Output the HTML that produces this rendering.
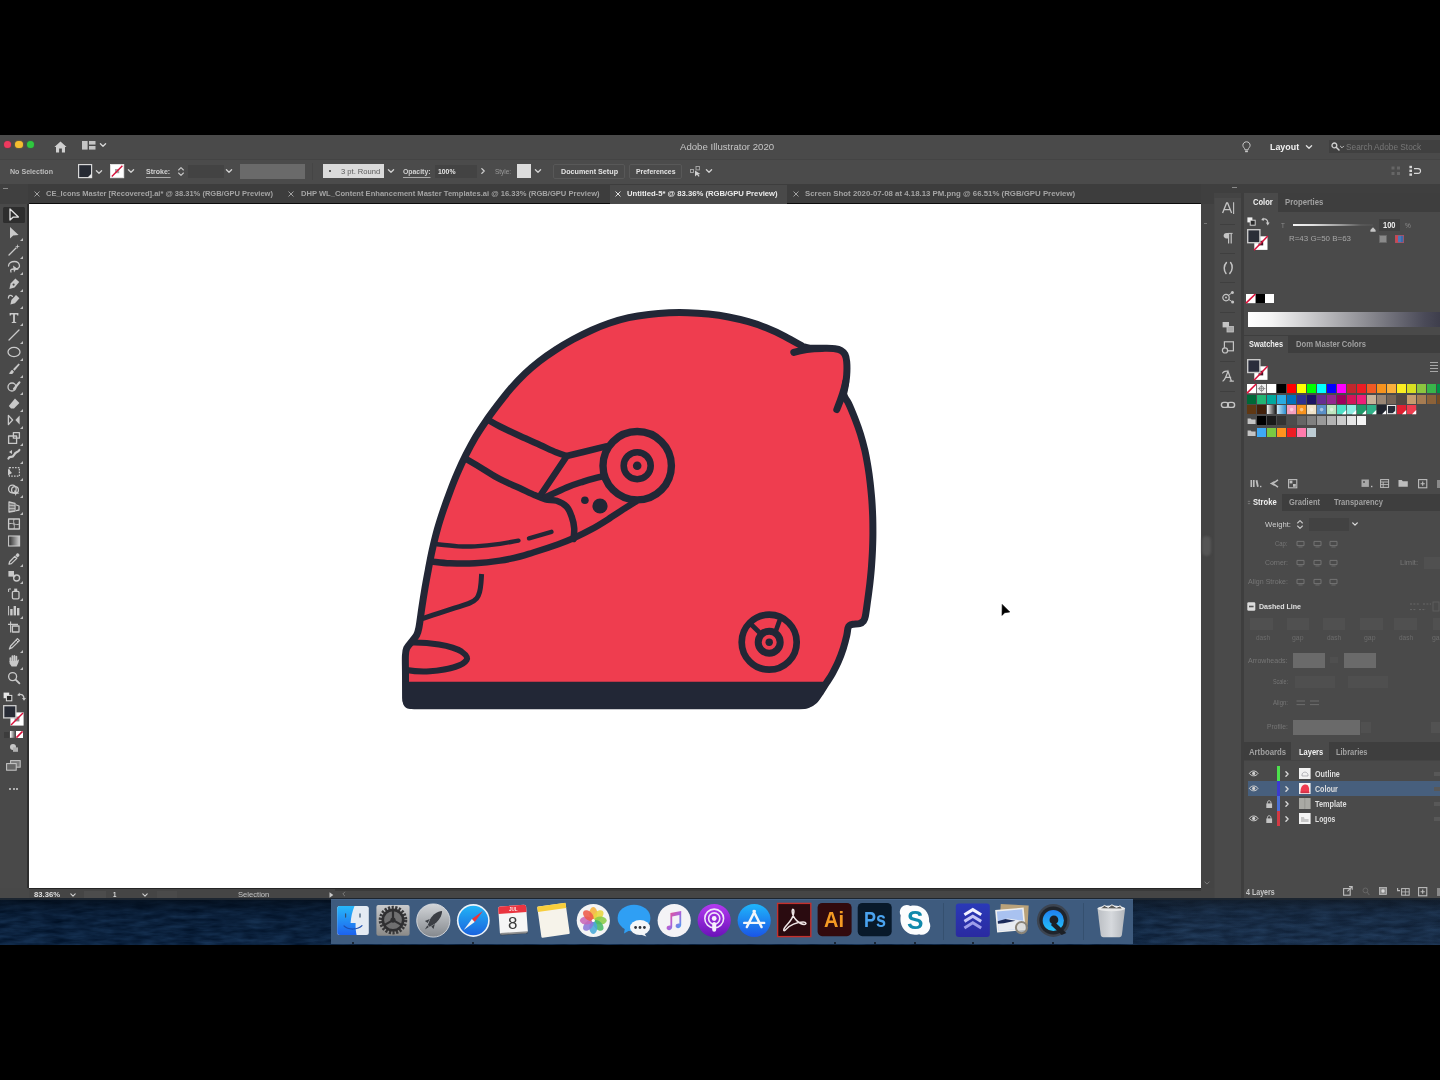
<!DOCTYPE html>
<html lang="en">
<head>
<meta charset="utf-8">
<title>Adobe Illustrator 2020</title>
<style>
*{box-sizing:border-box;margin:0;padding:0}
html,body{width:1440px;height:1080px;overflow:hidden;background:#000}
body{position:relative;font-family:"Liberation Sans",sans-serif;font-size:8px;color:#ddd}
.a{position:absolute;display:block}
svg.a{overflow:visible}
.t{position:absolute;white-space:pre;transform-origin:0 50%;font-family:"Liberation Sans",sans-serif}
.u{text-decoration:underline;text-underline-offset:1px}
#screen{position:absolute;left:0;top:0;width:1440px;height:1080px;overflow:hidden;background:#000}

</style>
</head>
<body>
<div id="screen">
<!-- application window -->
<div class="a" style="left:0px;top:135px;width:1440px;height:764px;background:#4a4a4a;"></div>
<div class="a" style="left:0px;top:135px;width:1440px;height:24px;background:#4a4a4a;"></div>
<div class="a" style="left:0px;top:159px;width:1440px;height:24.5px;background:#4b4b4b;border-top:1px solid #444"></div>
<div class="a" style="left:0px;top:183.5px;width:1440px;height:20.5px;background:#3d3d3d;"></div>
<div class="a" style="left:0px;top:204px;width:28.5px;height:695px;background:#494949;"></div>
<div class="a" style="left:0px;top:183.5px;width:28px;height:20.5px;background:#404040;"></div>
<div class="a" style="left:3px;top:187.5px;width:4.5px;height:1.2px;background:#8a8a8a;"></div>
<div class="a" style="left:28.5px;top:203.3px;width:1172.5px;height:1.2px;background:#0c0c0c;"></div>
<div class="a" style="left:28.8px;top:204.3px;width:1172.2px;height:683.4px;background:#ffffff;"></div>
<div class="a" style="left:26.8px;top:204px;width:2px;height:684px;background:#2e2e2e;filter:blur(.5px)"></div>
<div class="a" style="left:28.5px;top:887.7px;width:1185px;height:11.3px;background:#454545;border-top:1px solid #262626"></div>
<div class="a" style="left:0px;top:887.7px;width:28.5px;height:11.3px;background:#484848;"></div>
<div class="a" style="left:1201px;top:204px;width:12.5px;height:684px;background:#444444;"></div>
<div class="a" style="left:1201.6px;top:536px;width:9.6px;height:20px;background:#555;border-radius:5px;filter:blur(1.2px)"></div>
<div class="a" style="left:1201px;top:887.7px;width:12.5px;height:11.3px;background:#454545;"></div>
<svg class="a" style="left:1203px;top:879.5px;" width="8" height="6" viewBox="0 0 8 6"><path d="M1.8 1.9 L4 4.1 L6.2 1.9" fill="none" stroke="#7a7a7a" stroke-width="1" stroke-linecap="round" stroke-linejoin="round"/></svg>
<div class="a" style="left:1203.5px;top:222.5px;width:3.5px;height:1.2px;background:#777;"></div>
<!-- title bar -->
<div class="a" style="left:3.8px;top:140.8px;width:7.6px;height:7.6px;border-radius:50%;background:#ee3a5f;box-shadow:0 0 1.5px #b02040;filter:blur(.4px)"></div>
<div class="a" style="left:15.3px;top:140.8px;width:7.6px;height:7.6px;border-radius:50%;background:#f4bd30;box-shadow:0 0 1.5px #c89a20;filter:blur(.4px)"></div>
<div class="a" style="left:26.7px;top:140.8px;width:7.6px;height:7.6px;border-radius:50%;background:#2fc83f;box-shadow:0 0 1.5px #1f9a2c;filter:blur(.4px)"></div>
<svg class="a" style="left:54px;top:140.5px;" width="13" height="12" viewBox="0 0 13 12"><path d="M6.5 0.6 L12.6 6 L11 6 L11 11.4 L7.9 11.4 L7.9 7.6 L5.1 7.6 L5.1 11.4 L2 11.4 L2 6 L0.4 6 Z" fill="#cfcfcf"/></svg>
<svg class="a" style="left:81.7px;top:141.2px;" width="13.5" height="8.6" viewBox="0 0 13.5 8.6"><rect x="0" y="0" width="5.6" height="8.6" fill="#c4c4c4"/><rect x="7" y="0" width="6.5" height="3.6" fill="#c4c4c4"/><rect x="7" y="5" width="6.5" height="3.6" fill="#c4c4c4"/></svg>
<svg class="a" style="left:99px;top:142.2px;" width="8" height="6" viewBox="0 0 8 6"><path d="M1.4 1.7 L4 4.3 L6.6 1.7" fill="none" stroke="#d8d8d8" stroke-width="1.3" stroke-linecap="round" stroke-linejoin="round"/></svg>
<span class="t" style="left:680px;top:141.1px;font-size:9.5px;line-height:11.5px;font-weight:normal;color:#c6c6c6;transform:scaleX(1.013);">Adobe Illustrator 2020</span>
<svg class="a" style="left:1242px;top:140.5px;" width="9" height="12" viewBox="0 0 9 12"><path d="M4.5 0.8 C2.3 0.8 0.9 2.4 0.9 4.3 C0.9 5.8 1.9 6.6 2.6 7.6 L2.9 8.8 L6.1 8.8 L6.4 7.6 C7.1 6.6 8.1 5.8 8.1 4.3 C8.1 2.4 6.7 0.8 4.5 0.8 Z" fill="none" stroke="#c8c8c8" stroke-width="1"/><rect x="3.1" y="9.6" width="2.8" height="1.6" fill="#c8c8c8"/></svg>
<span class="t" style="left:1269.7px;top:141.2px;font-size:9.5px;line-height:11.5px;font-weight:bold;color:#f2f2f2;transform:scaleX(0.934);">Layout</span>
<svg class="a" style="left:1305px;top:143.5px;" width="8" height="6" viewBox="0 0 8 6"><path d="M1.4 1.7 L4 4.3 L6.6 1.7" fill="none" stroke="#e0e0e0" stroke-width="1.3" stroke-linecap="round" stroke-linejoin="round"/></svg>
<div class="a" style="left:1329px;top:140px;width:111px;height:12.5px;background:#404040;"></div>
<svg class="a" style="left:1330.5px;top:141.5px;" width="9" height="9" viewBox="0 0 9 9"><circle cx="3.4" cy="3.4" r="2.4" fill="none" stroke="#cfcfcf" stroke-width="1.3"/><path d="M5.2 5.2 L8 8" stroke="#cfcfcf" stroke-width="1.5" stroke-linecap="round"/></svg>
<svg class="a" style="left:1337.5px;top:143.6px;" width="8" height="6" viewBox="0 0 8 6"><path d="M2.4 2.2 L4 3.8 L5.6 2.2" fill="none" stroke="#c0c0c0" stroke-width="1" stroke-linecap="round" stroke-linejoin="round"/></svg>
<span class="t" style="left:1345.8px;top:142.2px;font-size:8.5px;line-height:10.5px;font-weight:normal;color:#777;transform:scaleX(0.974);">Search Adobe Stock</span>
<!-- control bar -->
<span class="t" style="left:10px;top:166.6px;font-size:8px;line-height:10px;font-weight:bold;color:#bdbdbd;transform:scaleX(0.887);">No Selection</span>
<svg class="a" style="left:78.3px;top:164.2px;" width="14.2" height="14.2" viewBox="0 0 14.2 14.2"><rect x="0.6" y="0.6" width="13" height="13" fill="#262a33" stroke="#d8d8d8" stroke-width="1.2"/><path d="M13.6 9.6 L13.6 13.6 L9.6 13.6 Z" fill="#e8e8e8"/></svg>
<svg class="a" style="left:95.3px;top:168.5px;" width="8" height="6" viewBox="0 0 8 6"><path d="M1.4 1.7 L4 4.3 L6.6 1.7" fill="none" stroke="#d0d0d0" stroke-width="1.3" stroke-linecap="round" stroke-linejoin="round"/></svg>
<svg class="a" style="left:110px;top:164.2px;" width="14.2" height="14.2" viewBox="0 0 14.2 14.2"><rect x="0.4" y="0.4" width="13.4" height="13.4" fill="#fff" stroke="#e8e8e8" stroke-width=".8"/><rect x="5" y="5" width="4.2" height="4.2" fill="#5a5a5a" opacity=".55"/><path d="M1.8 12.4 L12.4 1.8" stroke="#d8103a" stroke-width="1.4"/></svg>
<svg class="a" style="left:126.6px;top:168px;" width="8" height="6" viewBox="0 0 8 6"><path d="M1.4 1.7 L4 4.3 L6.6 1.7" fill="none" stroke="#d0d0d0" stroke-width="1.3" stroke-linecap="round" stroke-linejoin="round"/></svg>
<span class="t" style="left:145.8px;top:166.9px;font-size:8px;line-height:10px;font-weight:bold;color:#d2d2d2;transform:scaleX(0.878);border-bottom:0.8px solid #a8a8a8;">Stroke:</span>
<svg class="a" style="left:177px;top:166px;" width="8" height="11" viewBox="0 0 8 11"><path d="M1.6 4 L4 1.6 L6.4 4 M1.6 7 L4 9.4 L6.4 7" fill="none" stroke="#c8c8c8" stroke-width="1.1" stroke-linecap="round" stroke-linejoin="round"/></svg>
<div class="a" style="left:188px;top:165px;width:36px;height:13px;background:#434343;"></div>
<svg class="a" style="left:225.3px;top:168.3px;" width="8" height="6" viewBox="0 0 8 6"><path d="M1.4 1.7 L4 4.3 L6.6 1.7" fill="none" stroke="#d0d0d0" stroke-width="1.3" stroke-linecap="round" stroke-linejoin="round"/></svg>
<div class="a" style="left:240px;top:163.6px;width:65px;height:15.4px;background:#6a6a6a;"></div>
<div class="a" style="left:312px;top:163px;width:1px;height:17px;background:#454545;"></div>
<div class="a" style="left:322.5px;top:164.2px;width:61.7px;height:14.2px;background:#dadada;"></div>
<div class="a" style="left:328.6px;top:170.4px;width:2px;height:2px;background:#333;border-radius:50%"></div>
<span class="t" style="left:340.8px;top:166.8px;font-size:8px;line-height:10px;font-weight:normal;color:#5a5a5a;transform:scaleX(0.948);">3 pt. Round</span>
<svg class="a" style="left:386.8px;top:168.3px;" width="8" height="6" viewBox="0 0 8 6"><path d="M1.4 1.7 L4 4.3 L6.6 1.7" fill="none" stroke="#d0d0d0" stroke-width="1.3" stroke-linecap="round" stroke-linejoin="round"/></svg>
<span class="t" style="left:402.5px;top:166.9px;font-size:8px;line-height:10px;font-weight:bold;color:#d2d2d2;transform:scaleX(0.859);border-bottom:0.8px solid #a8a8a8;">Opacity:</span>
<div class="a" style="left:435px;top:165px;width:42px;height:13px;background:#434343;"></div>
<span class="t" style="left:438.3px;top:166.9px;font-size:8px;line-height:10px;font-weight:bold;color:#e6e6e6;transform:scaleX(0.855);">100%</span>
<svg class="a" style="left:480.3px;top:167.3px;" width="6" height="8" viewBox="0 0 6 8"><path d="M1.8 1.6 L4.2 4 L1.8 6.4" fill="none" stroke="#d0d0d0" stroke-width="1.3" stroke-linecap="round" stroke-linejoin="round"/></svg>
<span class="t" style="left:494.7px;top:166.9px;font-size:8px;line-height:10px;font-weight:normal;color:#9c9c9c;transform:scaleX(0.805);">Style:</span>
<div class="a" style="left:517.2px;top:164.2px;width:14.2px;height:14.2px;background:#dcdcdc;"></div>
<svg class="a" style="left:534px;top:168.3px;" width="8" height="6" viewBox="0 0 8 6"><path d="M1.4 1.7 L4 4.3 L6.6 1.7" fill="none" stroke="#d0d0d0" stroke-width="1.3" stroke-linecap="round" stroke-linejoin="round"/></svg>
<div class="a" style="left:552.5px;top:163.6px;width:72.5px;height:15.4px;background:#4a4a4a;border:1px solid #585858;border-radius:2px"></div>
<span class="t" style="left:560.5px;top:166.9px;font-size:8px;line-height:10px;font-weight:bold;color:#e4e4e4;transform:scaleX(0.897);">Document Setup</span>
<div class="a" style="left:629px;top:163.6px;width:52.7px;height:15.4px;background:#4a4a4a;border:1px solid #585858;border-radius:2px"></div>
<span class="t" style="left:635.8px;top:166.9px;font-size:8px;line-height:10px;font-weight:bold;color:#e4e4e4;transform:scaleX(0.862);">Preferences</span>
<svg class="a" style="left:690px;top:166px;" width="12" height="11" viewBox="0 0 12 11"><rect x="0.5" y="3.5" width="3" height="3" fill="none" stroke="#aaa" stroke-width=".9"/><rect x="6" y="0.5" width="3.4" height="3.4" fill="none" stroke="#aaa" stroke-width=".9"/><path d="M5 4.5 L5 10.5 L7 8.8 L8.6 10.8 L9.6 10 L8.2 8.2 L10.4 8 Z" fill="#d0d0d0"/></svg>
<svg class="a" style="left:704.8px;top:167.6px;" width="8" height="6" viewBox="0 0 8 6"><path d="M1.4 1.7 L4 4.3 L6.6 1.7" fill="none" stroke="#d0d0d0" stroke-width="1.3" stroke-linecap="round" stroke-linejoin="round"/></svg>
<svg class="a" style="left:1391px;top:166px;" width="10" height="10" viewBox="0 0 10 10"><rect x="0.5" y="0.5" width="3" height="3" fill="#666"/><rect x="6" y="0.5" width="3" height="3" fill="#666"/><rect x="0.5" y="6" width="3" height="3" fill="#666"/><rect x="6" y="6" width="3" height="3" fill="#666"/></svg>
<svg class="a" style="left:1409px;top:165px;" width="14" height="12" viewBox="0 0 14 12"><rect x="0.4" y="0.8" width="2.6" height="2.4" fill="#d8d8d8"/><rect x="0.4" y="4.6" width="2.6" height="2.4" fill="#d8d8d8"/><rect x="0.4" y="8.4" width="2.6" height="2.4" fill="#d8d8d8"/><path d="M5 3.6 L9 3.6 C12.4 3.6 12.4 8.4 9 8.4 L5 8.4" fill="none" stroke="#d8d8d8" stroke-width="1.2"/></svg>
<!-- document tabs -->
<div class="a" style="left:610px;top:184.5px;width:176.7px;height:19px;background:#494949;"></div>
<svg class="a" style="left:33.7px;top:190.8px;" width="6" height="6" viewBox="0 0 6 6"><path d="M0.8 0.8 L5.2 5.2 M5.2 0.8 L0.8 5.2" stroke="#a0a0a0" stroke-width="1" stroke-linecap="round"/></svg>
<span class="t" style="left:46.3px;top:189.2px;font-size:8px;line-height:10px;font-weight:bold;color:#a4a4a4;transform:scaleX(0.939);">CE_Icons Master [Recovered].ai* @ 38.31% (RGB/GPU Preview)</span>
<svg class="a" style="left:287.8px;top:190.8px;" width="6" height="6" viewBox="0 0 6 6"><path d="M0.8 0.8 L5.2 5.2 M5.2 0.8 L0.8 5.2" stroke="#a0a0a0" stroke-width="1" stroke-linecap="round"/></svg>
<span class="t" style="left:300.8px;top:189.2px;font-size:8px;line-height:10px;font-weight:bold;color:#a4a4a4;transform:scaleX(0.946);">DHP WL_Content Enhancement Master Templates.ai @ 16.33% (RGB/GPU Preview)</span>
<svg class="a" style="left:614.5px;top:190.8px;" width="6" height="6" viewBox="0 0 6 6"><path d="M0.8 0.8 L5.2 5.2 M5.2 0.8 L0.8 5.2" stroke="#e0e0e0" stroke-width="1" stroke-linecap="round"/></svg>
<span class="t" style="left:627.2px;top:189.2px;font-size:8px;line-height:10px;font-weight:bold;color:#ececec;transform:scaleX(0.961);">Untitled-5* @ 83.36% (RGB/GPU Preview)</span>
<svg class="a" style="left:792.8px;top:190.8px;" width="6" height="6" viewBox="0 0 6 6"><path d="M0.8 0.8 L5.2 5.2 M5.2 0.8 L0.8 5.2" stroke="#a0a0a0" stroke-width="1" stroke-linecap="round"/></svg>
<span class="t" style="left:805px;top:189.2px;font-size:8px;line-height:10px;font-weight:bold;color:#a4a4a4;transform:scaleX(0.979);">Screen Shot 2020-07-08 at 4.18.13 PM.png @ 66.51% (RGB/GPU Preview)</span>
<!-- status bar -->
<span class="t" style="left:34px;top:890px;font-size:8px;line-height:10px;font-weight:bold;color:#dedede;transform:scaleX(0.958);">83.36%</span>
<svg class="a" style="left:69.3px;top:891.8px;" width="8" height="6" viewBox="0 0 8 6"><path d="M1.8 1.9 L4 4.1 L6.2 1.9" fill="none" stroke="#d0d0d0" stroke-width="1.1" stroke-linecap="round" stroke-linejoin="round"/></svg>
<div class="a" style="left:84px;top:891px;width:22px;height:7.5px;background:#4c4c4c;"></div>
<span class="t" style="left:113.3px;top:890px;font-size:8px;line-height:10px;font-weight:bold;color:#dedede;transform:scaleX(0.764);">1</span>
<svg class="a" style="left:141px;top:891.8px;" width="8" height="6" viewBox="0 0 8 6"><path d="M1.8 1.9 L4 4.1 L6.2 1.9" fill="none" stroke="#d0d0d0" stroke-width="1.1" stroke-linecap="round" stroke-linejoin="round"/></svg>
<div class="a" style="left:157px;top:891px;width:20px;height:7.5px;background:#4a4a4a;"></div>
<span class="t" style="left:238px;top:890px;font-size:8px;line-height:10px;font-weight:normal;color:#c4c4c4;transform:scaleX(0.951);">Selection</span>
<svg class="a" style="left:329px;top:891.5px;" width="5" height="6" viewBox="0 0 5 6"><path d="M0.5 0.3 L4.3 3 L0.5 5.7 Z" fill="#c8c8c8"/></svg>
<svg class="a" style="left:340.5px;top:891.4px;" width="6" height="6" viewBox="0 0 6 6"><path d="M4 0.8 L1.8 3 L4 5.2" fill="none" stroke="#7a7a7a" stroke-width="1"/></svg>
<div class="a" style="left:335px;top:888.7px;width:866px;height:2.2px;background:#3a3a3a;"></div>
<!-- mouse cursor -->
<svg class="a" style="left:1000px;top:602px;filter:blur(.4px)" width="12" height="16" viewBox="0 0 12 16"><path d="M2.2 2.4 L2 13.4 L4.7 10.7 L9.8 10 Z" fill="#000" stroke="#000" stroke-width=".6" stroke-linejoin="round"/></svg>
<!-- tools panel -->
<div class="a" style="left:3px;top:207.2px;width:21.5px;height:15.6px;background:#2e2e2e;border-radius:1.5px"></div>
<svg class="a" style="left:5.6px;top:207px;" width="16" height="16" viewBox="0 0 16 16"><path d="M4 2 L4 13 L7 10.2 L12.4 10 Z" fill="none" stroke="#e4e4e4" stroke-width="1.3" stroke-linejoin="round"/></svg>
<svg class="a" style="left:5.6px;top:224.5px;" width="16" height="16" viewBox="0 0 16 16"><path d="M4 2 L4 13.4 L7.2 10.4 L12.6 10 Z" fill="#c9c9c9"/></svg><svg class="a" style="left:20.1px;top:238px;" width="3" height="3" viewBox="0 0 3 3"><path d="M3 0 L3 3 L0 3 Z" fill="#bdbdbd"/></svg>
<svg class="a" style="left:5.6px;top:242px;" width="16" height="16" viewBox="0 0 16 16"><path d="M3 13 L10 6" fill="none" stroke="#c9c9c9" stroke-width="1.3" stroke-linecap="round" stroke-linejoin="round"/><path d="M11.5 2 L12 4 L14 4.5 L12 5 L11.5 7 L11 5 L9 4.5 L11 4 Z" fill="#c9c9c9"/></svg><svg class="a" style="left:20.1px;top:255.5px;" width="3" height="3" viewBox="0 0 3 3"><path d="M3 0 L3 3 L0 3 Z" fill="#bdbdbd"/></svg>
<svg class="a" style="left:5.6px;top:258.5px;" width="16" height="16" viewBox="0 0 16 16"><path d="M2.5 7 C2.5 3.5 5.5 2.5 8.5 2.5 C11.5 2.5 13.5 4.5 13.5 7 C13.5 9 11 10 8 10 C5 10 4 11 5 13" fill="none" stroke="#c9c9c9" stroke-width="1.3" stroke-linecap="round" stroke-linejoin="round"/><path d="M7 6.4 L12.8 10.8 L9.6 11 L8 13.6 Z" fill="#c9c9c9"/></svg><svg class="a" style="left:20.1px;top:272px;" width="3" height="3" viewBox="0 0 3 3"><path d="M3 0 L3 3 L0 3 Z" fill="#bdbdbd"/></svg>
<svg class="a" style="left:5.6px;top:275.7px;" width="16" height="16" viewBox="0 0 16 16"><path d="M9.4 2.4 L13.2 6 L8.6 11.4 L3.4 13 L4.6 7.6 Z" fill="#c9c9c9"/><circle cx="7.6" cy="8.6" r="1.1" fill="#494949"/></svg><svg class="a" style="left:20.1px;top:289.2px;" width="3" height="3" viewBox="0 0 3 3"><path d="M3 0 L3 3 L0 3 Z" fill="#bdbdbd"/></svg>
<svg class="a" style="left:5.6px;top:292.3px;" width="16" height="16" viewBox="0 0 16 16"><path d="M10 3 L13.4 6.2 L9 11.2 L4.4 12.6 L5.4 8 Z" fill="#c9c9c9"/><path d="M2.4 6 C2.4 3 5 2.6 6.4 4.4" fill="none" stroke="#c9c9c9" stroke-width="1.3" stroke-linecap="round" stroke-linejoin="round"/></svg><svg class="a" style="left:20.1px;top:305.8px;" width="3" height="3" viewBox="0 0 3 3"><path d="M3 0 L3 3 L0 3 Z" fill="#bdbdbd"/></svg>
<svg class="a" style="left:5.6px;top:309.5px;" width="16" height="16" viewBox="0 0 16 16"><path d="M3.6 3 L12.4 3 L12.4 5.6 L11.2 5.6 L10.8 4.4 L8.9 4.4 L8.9 11.8 L10.3 12.2 L10.3 13 L5.7 13 L5.7 12.2 L7.1 11.8 L7.1 4.4 L5.2 4.4 L4.8 5.6 L3.6 5.6 Z" fill="#c9c9c9"/></svg><svg class="a" style="left:20.1px;top:323px;" width="3" height="3" viewBox="0 0 3 3"><path d="M3 0 L3 3 L0 3 Z" fill="#bdbdbd"/></svg>
<svg class="a" style="left:5.6px;top:327px;" width="16" height="16" viewBox="0 0 16 16"><path d="M3 13 L13 3" fill="none" stroke="#c9c9c9" stroke-width="1.3" stroke-linecap="round" stroke-linejoin="round"/></svg><svg class="a" style="left:20.1px;top:340.5px;" width="3" height="3" viewBox="0 0 3 3"><path d="M3 0 L3 3 L0 3 Z" fill="#bdbdbd"/></svg>
<svg class="a" style="left:5.6px;top:344.3px;" width="16" height="16" viewBox="0 0 16 16"><ellipse cx="8" cy="8" rx="6" ry="4.6" fill="none" stroke="#c9c9c9" stroke-width="1.3" stroke-linecap="round" stroke-linejoin="round"/></svg><svg class="a" style="left:20.1px;top:357.8px;" width="3" height="3" viewBox="0 0 3 3"><path d="M3 0 L3 3 L0 3 Z" fill="#bdbdbd"/></svg>
<svg class="a" style="left:5.6px;top:361px;" width="16" height="16" viewBox="0 0 16 16"><path d="M12.6 2.4 L13.8 3.6 L8.6 9.8 L7 8.2 Z" fill="#c9c9c9"/><path d="M6.4 9 C4.6 9 4.6 11.6 2.6 12.6 C5 13.6 7.8 12.6 7.8 10.4 Z" fill="#c9c9c9"/></svg><svg class="a" style="left:20.1px;top:374.5px;" width="3" height="3" viewBox="0 0 3 3"><path d="M3 0 L3 3 L0 3 Z" fill="#bdbdbd"/></svg>
<svg class="a" style="left:5.6px;top:378.3px;" width="16" height="16" viewBox="0 0 16 16"><circle cx="6" cy="9" r="4" fill="none" stroke="#c9c9c9" stroke-width="1.3" stroke-linecap="round" stroke-linejoin="round"/><path d="M8 11 L13.4 4.4" stroke="#c9c9c9" stroke-width="2.2" stroke-linecap="round"/></svg><svg class="a" style="left:20.1px;top:391.8px;" width="3" height="3" viewBox="0 0 3 3"><path d="M3 0 L3 3 L0 3 Z" fill="#bdbdbd"/></svg>
<svg class="a" style="left:5.6px;top:395.6px;" width="16" height="16" viewBox="0 0 16 16"><path d="M9 2.6 L13.4 7 L8 12.4 L5 12.4 L2.8 10 Z" fill="#c9c9c9"/></svg><svg class="a" style="left:20.1px;top:409.1px;" width="3" height="3" viewBox="0 0 3 3"><path d="M3 0 L3 3 L0 3 Z" fill="#bdbdbd"/></svg>
<svg class="a" style="left:5.6px;top:412.3px;" width="16" height="16" viewBox="0 0 16 16"><path d="M2.4 3.4 L6.6 8 L2.4 12.6 Z" fill="none" stroke="#c9c9c9" stroke-width="1.3" stroke-linecap="round" stroke-linejoin="round"/><path d="M13.6 3.4 L9.4 8 L13.6 12.6 Z" fill="#c9c9c9"/></svg><svg class="a" style="left:20.1px;top:425.8px;" width="3" height="3" viewBox="0 0 3 3"><path d="M3 0 L3 3 L0 3 Z" fill="#bdbdbd"/></svg>
<svg class="a" style="left:5.6px;top:429.5px;" width="16" height="16" viewBox="0 0 16 16"><rect x="2.6" y="6" width="8" height="7.4" fill="none" stroke="#c9c9c9" stroke-width="1.3" stroke-linecap="round" stroke-linejoin="round"/><rect x="7.4" y="2.6" width="6" height="5.6" fill="none" stroke="#c9c9c9" stroke-width="1.3" stroke-linecap="round" stroke-linejoin="round"/></svg><svg class="a" style="left:20.1px;top:443px;" width="3" height="3" viewBox="0 0 3 3"><path d="M3 0 L3 3 L0 3 Z" fill="#bdbdbd"/></svg>
<svg class="a" style="left:5.6px;top:447px;" width="16" height="16" viewBox="0 0 16 16"><path d="M2.4 11.6 C4 8 6 12 8 8 C10 4 11.6 6 13.4 3" stroke="#c9c9c9" stroke-width="2.2" fill="none" stroke-linecap="round"/><path d="M3 5 L6 3 L6 7 Z" fill="#c9c9c9"/></svg><svg class="a" style="left:20.1px;top:460.5px;" width="3" height="3" viewBox="0 0 3 3"><path d="M3 0 L3 3 L0 3 Z" fill="#bdbdbd"/></svg>
<svg class="a" style="left:5.6px;top:464.3px;" width="16" height="16" viewBox="0 0 16 16"><rect x="3.4" y="3.6" width="10" height="8.6" fill="none" stroke="#c9c9c9" stroke-width="1.2" stroke-dasharray="1.6 1.2"/><path d="M2 4.4 L2 11.6 L6 9 Z" fill="#c9c9c9"/></svg><svg class="a" style="left:20.1px;top:477.8px;" width="3" height="3" viewBox="0 0 3 3"><path d="M3 0 L3 3 L0 3 Z" fill="#bdbdbd"/></svg>
<svg class="a" style="left:5.6px;top:481.6px;" width="16" height="16" viewBox="0 0 16 16"><circle cx="6.4" cy="7" r="3.8" fill="none" stroke="#c9c9c9" stroke-width="1.3" stroke-linecap="round" stroke-linejoin="round"/><circle cx="9" cy="8" r="3.4" fill="none" stroke="#c9c9c9" stroke-width="1.3" stroke-linecap="round" stroke-linejoin="round"/><path d="M8.4 8 L13.4 11.4 L10.6 11.8 L9.4 14 Z" fill="#c9c9c9"/></svg><svg class="a" style="left:20.1px;top:495.1px;" width="3" height="3" viewBox="0 0 3 3"><path d="M3 0 L3 3 L0 3 Z" fill="#bdbdbd"/></svg>
<svg class="a" style="left:5.6px;top:498.8px;" width="16" height="16" viewBox="0 0 16 16"><path d="M3 3 L9 4.4 L9 12 L3 13 Z" fill="none" stroke="#c9c9c9" stroke-width="1.3" stroke-linecap="round" stroke-linejoin="round"/><path d="M5 3.6 L5 12.6 M7 4 L7 12.2 M3 6.2 L9 6.8 M3 9.6 L9 9.6" stroke="#c9c9c9" stroke-width=".8"/><path d="M10.4 6 L13 7 L13 11 L10.4 11.6" fill="none" stroke="#c9c9c9" stroke-width="1.3" stroke-linecap="round" stroke-linejoin="round"/></svg><svg class="a" style="left:20.1px;top:512.3px;" width="3" height="3" viewBox="0 0 3 3"><path d="M3 0 L3 3 L0 3 Z" fill="#bdbdbd"/></svg>
<svg class="a" style="left:5.6px;top:516px;" width="16" height="16" viewBox="0 0 16 16"><rect x="2.6" y="3" width="10.8" height="10" fill="none" stroke="#c9c9c9" stroke-width="1.3" stroke-linecap="round" stroke-linejoin="round"/><path d="M2.6 8 C6 6 10 10 13.4 8 M8 3 C6.6 6 9.4 10 8 13" stroke="#c9c9c9" stroke-width=".9" fill="none"/></svg>
<svg class="a" style="left:5.6px;top:533.2px;" width="16" height="16" viewBox="0 0 16 16"><defs><linearGradient id="gtool" x1="0" x2="1"><stop offset="0" stop-color="#2c2c2c"/><stop offset="1" stop-color="#d0d0d0"/></linearGradient></defs><rect x="2.6" y="3" width="11" height="10" fill="url(#gtool)" stroke="#c9c9c9" stroke-width="1.1"/></svg>
<svg class="a" style="left:5.6px;top:550.6px;" width="16" height="16" viewBox="0 0 16 16"><path d="M10.8 2.6 C12 1.6 14.2 3.6 13.2 5 L11.6 6.6 L9.4 4.4 Z" fill="#c9c9c9"/><path d="M8.8 5.4 L10.8 7.4 L5.4 12.6 L3 13.2 L3.6 10.8 Z" fill="none" stroke="#c9c9c9" stroke-width="1.3" stroke-linecap="round" stroke-linejoin="round"/></svg><svg class="a" style="left:20.1px;top:564.1px;" width="3" height="3" viewBox="0 0 3 3"><path d="M3 0 L3 3 L0 3 Z" fill="#bdbdbd"/></svg>
<svg class="a" style="left:5.6px;top:567.6px;" width="16" height="16" viewBox="0 0 16 16"><rect x="2.4" y="3" width="5.6" height="5.6" fill="#c9c9c9"/><circle cx="10.6" cy="10" r="3" fill="none" stroke="#c9c9c9" stroke-width="1.3" stroke-linecap="round" stroke-linejoin="round"/><path d="M6 6 L9 9" stroke="#c9c9c9" stroke-width="2"/></svg><svg class="a" style="left:20.1px;top:581.1px;" width="3" height="3" viewBox="0 0 3 3"><path d="M3 0 L3 3 L0 3 Z" fill="#bdbdbd"/></svg>
<svg class="a" style="left:5.6px;top:584.8px;" width="16" height="16" viewBox="0 0 16 16"><rect x="6.4" y="6.4" width="6.6" height="7.4" rx="1.2" fill="none" stroke="#c9c9c9" stroke-width="1.3" stroke-linecap="round" stroke-linejoin="round"/><rect x="8.2" y="3.6" width="3" height="2.8" fill="#c9c9c9"/><path d="M2.6 4 L5 4 M2.6 4 L2.6 7" stroke="#c9c9c9" stroke-width="1"/></svg><svg class="a" style="left:20.1px;top:598.3px;" width="3" height="3" viewBox="0 0 3 3"><path d="M3 0 L3 3 L0 3 Z" fill="#bdbdbd"/></svg>
<svg class="a" style="left:5.6px;top:602px;" width="16" height="16" viewBox="0 0 16 16"><path d="M2.6 13.4 L2.6 4" stroke="#c9c9c9" stroke-width="1"/><rect x="4.2" y="7" width="2.4" height="6.4" fill="#c9c9c9"/><rect x="7.6" y="4" width="2.4" height="9.4" fill="#c9c9c9"/><rect x="11" y="6" width="2.4" height="7.4" fill="#c9c9c9"/></svg><svg class="a" style="left:20.1px;top:615.5px;" width="3" height="3" viewBox="0 0 3 3"><path d="M3 0 L3 3 L0 3 Z" fill="#bdbdbd"/></svg>
<svg class="a" style="left:5.6px;top:619.4px;" width="16" height="16" viewBox="0 0 16 16"><path d="M2 5.4 L12 5.4 M4.6 2.6 L4.6 13.4" stroke="#c9c9c9" stroke-width="1.1"/><rect x="6.4" y="7" width="6.6" height="6" fill="none" stroke="#c9c9c9" stroke-width="1.3" stroke-linecap="round" stroke-linejoin="round"/></svg>
<svg class="a" style="left:5.6px;top:636.2px;" width="16" height="16" viewBox="0 0 16 16"><path d="M11.4 2.6 L13.4 4.6 L6.2 11.6 L3.4 13 L4.6 10 Z" fill="none" stroke="#c9c9c9" stroke-width="1.3" stroke-linecap="round" stroke-linejoin="round"/><path d="M10 4 L12 6" stroke="#c9c9c9" stroke-width="1"/></svg><svg class="a" style="left:20.1px;top:649.7px;" width="3" height="3" viewBox="0 0 3 3"><path d="M3 0 L3 3 L0 3 Z" fill="#bdbdbd"/></svg>
<svg class="a" style="left:5.6px;top:653.2px;" width="16" height="16" viewBox="0 0 16 16"><path d="M4.4 8.4 L4.4 5 M6.4 7.6 L6.4 3.2 M8.4 7.6 L8.4 2.8 M10.4 7.8 L10.4 3.6" stroke="#c9c9c9" stroke-width="1.7" stroke-linecap="round"/><path d="M3.6 8 L11.6 7.4 L13.2 6 L12.4 9.6 L10.6 13.4 L5.6 13.4 L3.6 10.6 Z" fill="#c9c9c9"/></svg><svg class="a" style="left:20.1px;top:666.7px;" width="3" height="3" viewBox="0 0 3 3"><path d="M3 0 L3 3 L0 3 Z" fill="#bdbdbd"/></svg>
<svg class="a" style="left:5.6px;top:669.8px;" width="16" height="16" viewBox="0 0 16 16"><circle cx="6.6" cy="6.6" r="4" fill="none" stroke="#c9c9c9" stroke-width="1.3" stroke-linecap="round" stroke-linejoin="round"/><path d="M9.6 9.6 L13.4 13.4" stroke="#c9c9c9" stroke-width="1.8" stroke-linecap="round"/></svg>
<svg class="a" style="left:2.5px;top:692px;" width="9.5" height="9.5" viewBox="0 0 9.5 9.5"><rect x="0.6" y="0.6" width="5.6" height="5.6" fill="#e8e8e8"/><rect x="3.4" y="3.4" width="5.4" height="5.4" fill="#2a2a2a" stroke="#e0e0e0" stroke-width="1"/></svg>
<svg class="a" style="left:17px;top:692px;" width="9" height="9" viewBox="0 0 9 9"><path d="M1 3 C4.4 1.4 7 3 7 6.6" fill="none" stroke="#c8c8c8" stroke-width="1.3"/><path d="M5 6 L9 6 L7 8.8 Z" fill="#c8c8c8"/><path d="M0.2 3.2 L2.6 0.6 L3 4 Z" fill="#c8c8c8"/></svg>
<svg class="a" style="left:10px;top:712.3px;" width="14" height="14" viewBox="0 0 14 14"><rect x="0.4" y="0.4" width="13.2" height="13.2" fill="#fff"/><rect x="4.6" y="4.6" width="4.8" height="4.8" fill="#555" opacity=".7"/><path d="M1 13 L13 1" stroke="#d8103a" stroke-width="1.5"/></svg>
<svg class="a" style="left:3px;top:705px;" width="13.6" height="13.6" viewBox="0 0 13.6 13.6"><rect x="0.7" y="0.7" width="12.2" height="12.2" fill="#282c36" stroke="#cfcfcf" stroke-width="1.3"/></svg>
<div class="a" style="left:3.5px;top:731.5px;width:5.6px;height:6.4px;background:#3c3c3c;"></div>
<svg class="a" style="left:10px;top:731.3px;" width="5" height="6.8" viewBox="0 0 5 6.8"><defs><linearGradient id="gm" x1="0" x2="1"><stop offset="0" stop-color="#fff"/><stop offset="1" stop-color="#555"/></linearGradient></defs><rect width="5" height="6.8" fill="url(#gm)"/></svg>
<svg class="a" style="left:16.4px;top:731.2px;" width="7" height="7" viewBox="0 0 7 7"><rect width="7" height="7" fill="#fff"/><path d="M0.4 6.6 L6.6 0.4" stroke="#d8103a" stroke-width="1.5"/></svg>
<svg class="a" style="left:8.5px;top:742.5px;" width="10" height="10" viewBox="0 0 10 10"><circle cx="4" cy="4" r="3" fill="#c8c8c8"/><rect x="4" y="4.4" width="5" height="4.4" fill="#b0b0b0"/></svg>
<svg class="a" style="left:6px;top:759.5px;" width="15" height="11" viewBox="0 0 15 11"><rect x="4.6" y="0.6" width="9.6" height="6.6" fill="#7c7c7c" stroke="#c8c8c8" stroke-width="1"/><rect x="0.6" y="3.6" width="9.6" height="6.6" fill="#666" stroke="#c8c8c8" stroke-width="1"/></svg>
<div class="a" style="left:9.2px;top:787.8px;width:2px;height:2px;background:#d0d0d0;border-radius:50%"></div>
<div class="a" style="left:12.8px;top:787.8px;width:2px;height:2px;background:#d0d0d0;border-radius:50%"></div>
<div class="a" style="left:16.4px;top:787.8px;width:2px;height:2px;background:#d0d0d0;border-radius:50%"></div>
<!-- right icon dock + panels -->
<div class="a" style="left:1201px;top:183.5px;width:239px;height:9px;background:#3f3f3f;"></div>
<div class="a" style="left:1201px;top:192.5px;width:13px;height:11.5px;background:#3f3f3f;"></div>
<div class="a" style="left:1232px;top:187px;width:4.5px;height:1.2px;background:#8a8a8a;"></div>
<div class="a" style="left:1213.5px;top:192.5px;width:27.5px;height:706.5px;background:#4a4a4a;border-left:1px solid #474747"></div>
<div class="a" style="left:1213.5px;top:192.5px;width:27.5px;height:5px;background:#444;"></div>
<div class="a" style="left:1241px;top:192.5px;width:2.5px;height:706.5px;background:#3e3e3e;"></div>
<div class="a" style="left:1243.5px;top:192.5px;width:196.5px;height:706.5px;background:#4a4a4a;"></div>
<svg class="a" style="left:1219.5px;top:200.3px;" width="16" height="16" viewBox="0 0 16 16"><path d="M2.6 13 L6.6 3 L7.6 3 L11.6 13 M4.2 9.6 L10 9.6" fill="none" stroke="#c4c4c4" stroke-width="1.3"/><path d="M13.6 2.2 L13.6 14" stroke="#c4c4c4" stroke-width="1.1"/></svg>
<svg class="a" style="left:1219.5px;top:230.3px;" width="16" height="16" viewBox="0 0 16 16"><path d="M8.6 3.4 L8.6 13.4 M11.2 3.4 L11.2 13.4" stroke="#c4c4c4" stroke-width="1.2"/><path d="M8.6 3 L6.6 3 C2.6 3 2.6 8.4 6.6 8.4 L8.6 8.4 Z" fill="#c4c4c4"/><path d="M8 3.4 L12.6 3.4" stroke="#c4c4c4" stroke-width="1"/></svg>
<svg class="a" style="left:1219.5px;top:259.6px;" width="16" height="16" viewBox="0 0 16 16"><path d="M6.4 2.6 C3.6 5.4 3.6 10.6 6 13.4 M10.6 2.6 C13 5.4 12.6 10.6 9.8 13.4" fill="none" stroke="#c4c4c4" stroke-width="1.5" stroke-linecap="round"/></svg>
<svg class="a" style="left:1219.5px;top:289px;" width="16" height="16" viewBox="0 0 16 16"><circle cx="6" cy="8.6" r="3.2" fill="none" stroke="#c4c4c4" stroke-width="1.2"/><circle cx="6" cy="8.6" r="1" fill="#c4c4c4"/><circle cx="12.4" cy="3.4" r="1.5" fill="#c4c4c4"/><circle cx="12.6" cy="13" r="1.5" fill="#c4c4c4"/><path d="M8.4 6.6 L11.6 4 M8.6 10.4 L11.8 12.4" stroke="#c4c4c4" stroke-width="1"/></svg>
<svg class="a" style="left:1219.5px;top:318.5px;" width="16" height="16" viewBox="0 0 16 16"><rect x="2.6" y="3" width="6.4" height="5.4" fill="#c4c4c4"/><rect x="7" y="7.4" width="6.4" height="5.6" fill="#a8a8a8" stroke="#c4c4c4" stroke-width=".8"/></svg>
<svg class="a" style="left:1219.5px;top:339px;" width="16" height="16" viewBox="0 0 16 16"><rect x="4.4" y="2.8" width="9" height="9" fill="none" stroke="#c4c4c4" stroke-width="1.2"/><circle cx="5" cy="11.4" r="2.6" fill="#4a4a4a" stroke="#c4c4c4" stroke-width="1.2"/></svg>
<svg class="a" style="left:1219.5px;top:368px;" width="16" height="16" viewBox="0 0 16 16"><path d="M3 13 C5 12 6 9 8 3.4 L11.4 13 M5.6 9.4 L10.6 9.4 M2.6 5 C4 3 6.6 3 8 3.4 M10 13 L13.4 13" fill="none" stroke="#c4c4c4" stroke-width="1.25" stroke-linecap="round"/></svg>
<svg class="a" style="left:1219.5px;top:397px;" width="16" height="16" viewBox="0 0 16 16"><rect x="1.4" y="5.4" width="7" height="5" rx="2.5" fill="none" stroke="#c4c4c4" stroke-width="1.4"/><rect x="7.6" y="5.4" width="7" height="5" rx="2.5" fill="none" stroke="#c4c4c4" stroke-width="1.4"/></svg>
<div class="a" style="left:1220px;top:224px;width:15px;height:1px;background:#3f3f3f;"></div>
<div class="a" style="left:1220px;top:253px;width:15px;height:1px;background:#3f3f3f;"></div>
<div class="a" style="left:1220px;top:282px;width:15px;height:1px;background:#3f3f3f;"></div>
<div class="a" style="left:1220px;top:311.5px;width:15px;height:1px;background:#3f3f3f;"></div>
<div class="a" style="left:1220px;top:361px;width:15px;height:1px;background:#3f3f3f;"></div>
<div class="a" style="left:1220px;top:390.5px;width:15px;height:1px;background:#3f3f3f;"></div>
<!-- color panel -->
<div class="a" style="left:1243.5px;top:192.5px;width:196.5px;height:19.3px;background:#3e3e3e;"></div>
<div class="a" style="left:1244.3px;top:193.3px;width:34px;height:18.5px;background:#4a4a4a;"></div>
<span class="t" style="left:1253px;top:197px;font-size:8.5px;line-height:10.5px;font-weight:bold;color:#f0f0f0;transform:scaleX(0.892);">Color</span>
<span class="t" style="left:1285px;top:197px;font-size:8.5px;line-height:10.5px;font-weight:bold;color:#a0a0a0;transform:scaleX(0.911);">Properties</span>
<svg class="a" style="left:1246.5px;top:217px;" width="8.6" height="8.6" viewBox="0 0 8.6 8.6"><rect x="0.4" y="0.4" width="5" height="5" fill="#f0f0f0"/><rect x="3.2" y="3.2" width="5" height="5" fill="#2a2a2a" stroke="#ddd" stroke-width=".9"/></svg>
<svg class="a" style="left:1261px;top:216.8px;" width="8.6" height="8.6" viewBox="0 0 8.6 8.6"><path d="M1.4 2.4 C4.6 1 7 3 6.8 6.4" fill="none" stroke="#c8c8c8" stroke-width="1.3"/><path d="M4.8 5.6 L8.6 5.6 L6.8 8.4 Z" fill="#c8c8c8"/><path d="M0.2 3 L2.4 0.4 L3 3.8 Z" fill="#c8c8c8"/></svg>
<svg class="a" style="left:1254px;top:235.8px;" width="13.8" height="14.2" viewBox="0 0 13.8 14.2"><rect x="0.3" y="0.3" width="13.2" height="13.6" fill="#fff"/><rect x="4.6" y="4.8" width="4.6" height="4.6" fill="#4a1a2a"/><path d="M0 14.2 L13.8 0" stroke="#d8103a" stroke-width="1.5"/></svg>
<svg class="a" style="left:1246.6px;top:229px;" width="13.6" height="14.4" viewBox="0 0 13.6 14.4"><rect x="0.7" y="0.7" width="12.2" height="13" fill="#2a2e37" stroke="#c8c8c8" stroke-width="1.4"/></svg>
<span class="t" style="left:1280.5px;top:220.6px;font-size:8px;line-height:10px;font-weight:normal;color:#8c8c8c;transform:scaleX(0.777);">T</span>
<div class="a" style="left:1292.5px;top:223.6px;width:80px;height:2.8px;background:linear-gradient(90deg,#f4f4f4 0%,#e0e0e0 25%,#9a9a9a 60%,#585858 85%,#505050 100%)"></div>
<svg class="a" style="left:1369.5px;top:226.5px;" width="6" height="5" viewBox="0 0 6 5"><path d="M3 0.3 L5.6 3 L5.6 4.8 L0.4 4.8 L0.4 3 Z" fill="#c4c4c4"/></svg>
<div class="a" style="left:1379px;top:218.5px;width:21px;height:12.5px;background:#404040;"></div>
<span class="t" style="left:1382.5px;top:220px;font-size:8.5px;line-height:10.5px;font-weight:bold;color:#ededed;transform:scaleX(0.881);">100</span>
<span class="t" style="left:1404.6px;top:220.6px;font-size:8px;line-height:10px;font-weight:normal;color:#8c8c8c;transform:scaleX(0.815);">%</span>
<span class="t" style="left:1289px;top:234px;font-size:8px;line-height:10px;font-weight:normal;color:#a6a6a6;transform:scaleX(0.992);">R=43 G=50 B=63</span>
<svg class="a" style="left:1378.5px;top:235px;" width="8" height="8" viewBox="0 0 8 8"><rect x="0.5" y="0.5" width="7" height="7" fill="#8a8a8a" stroke="#6a6a6a" stroke-width=".8"/></svg>
<svg class="a" style="left:1395px;top:235px;" width="9" height="8" viewBox="0 0 9 8"><rect x="0" y="0" width="3" height="8" fill="#d0454f"/><rect x="3" y="0" width="3" height="8" fill="#4a78b8"/><rect x="6" y="0" width="3" height="8" fill="#3d6aa8"/><rect x="0.4" y="0.4" width="8.2" height="7.2" fill="none" stroke="#b05060" stroke-width=".8"/></svg>
<svg class="a" style="left:1246.4px;top:294.2px;" width="9.4" height="9.2" viewBox="0 0 9.4 9.2"><rect width="9.4" height="9.2" fill="#fff"/><path d="M0 9.2 L9.4 0" stroke="#e0103a" stroke-width="1.6"/></svg>
<div class="a" style="left:1255.8px;top:294.2px;width:9.2px;height:9.2px;background:#000;"></div>
<div class="a" style="left:1265px;top:294.2px;width:9.2px;height:9.2px;background:#fff;"></div>
<div class="a" style="left:1247.6px;top:311.7px;width:192.4px;height:15.8px;background:linear-gradient(90deg,#ffffff 0%,#f4f4f4 12%,#cfcfd1 30%,#a9a9ad 48%,#85858c 65%,#64646f 80%,#4a4a58 92%,#3e3e4c 100%)"></div>
<!-- swatches panel -->
<div class="a" style="left:1243.5px;top:334.8px;width:196.5px;height:18.2px;background:#3e3e3e;"></div>
<div class="a" style="left:1244.3px;top:335.6px;width:43.7px;height:17.6px;background:#4a4a4a;"></div>
<span class="t" style="left:1248.8px;top:339.4px;font-size:8.5px;line-height:10.5px;font-weight:bold;color:#f0f0f0;transform:scaleX(0.867);">Swatches</span>
<span class="t" style="left:1295.8px;top:339.4px;font-size:8.5px;line-height:10.5px;font-weight:bold;color:#a0a0a0;transform:scaleX(0.898);">Dom Master Colors</span>
<svg class="a" style="left:1254px;top:366px;" width="13.8" height="14.2" viewBox="0 0 13.8 14.2"><rect x="0.3" y="0.3" width="13.2" height="13.6" fill="#fff"/><rect x="4.6" y="4.8" width="4.6" height="4.6" fill="#4a1a2a"/><path d="M0 14.2 L13.8 0" stroke="#d8103a" stroke-width="1.5"/></svg>
<svg class="a" style="left:1246.6px;top:359px;" width="13.6" height="14.2" viewBox="0 0 13.6 14.2"><rect x="0.7" y="0.7" width="12.2" height="12.8" fill="#2a2d3c" stroke="#c8c8c8" stroke-width="1.4"/></svg>
<div class="a" style="left:1430px;top:362.3px;width:8.4px;height:1.2px;background:#a8a8a8;"></div>
<div class="a" style="left:1430px;top:365.2px;width:8.4px;height:1.2px;background:#a8a8a8;"></div>
<div class="a" style="left:1430px;top:368.1px;width:8.4px;height:1.2px;background:#a8a8a8;"></div>
<div class="a" style="left:1430px;top:371px;width:8.4px;height:1.2px;background:#a8a8a8;"></div>
<svg class="a" style="left:1246.6px;top:384.3px;" width="9.2" height="9.2" viewBox="0 0 9.2 9.2"><rect width="9.2" height="9.2" fill="#fff"/><path d="M0 9.2 L9.2 0" stroke="#e0103a" stroke-width="1.6"/></svg>
<svg class="a" style="left:1256.63px;top:384.3px;" width="9.2" height="9.2" viewBox="0 0 9.2 9.2"><rect width="9.2" height="9.2" fill="#f0f0f0"/><circle cx="4.6" cy="4.6" r="2.2" fill="none" stroke="#777" stroke-width=".8"/><path d="M4.6 0.8 L4.6 8.4 M0.8 4.6 L8.4 4.6" stroke="#777" stroke-width=".7"/></svg>
<div class="a" style="left:1266.66px;top:384.3px;width:9.2px;height:9.2px;background:#ffffff;"></div>
<div class="a" style="left:1276.69px;top:384.3px;width:9.2px;height:9.2px;background:#000000;"></div>
<div class="a" style="left:1286.72px;top:384.3px;width:9.2px;height:9.2px;background:#ff0000;"></div>
<div class="a" style="left:1296.75px;top:384.3px;width:9.2px;height:9.2px;background:#ffff00;"></div>
<div class="a" style="left:1306.78px;top:384.3px;width:9.2px;height:9.2px;background:#00ff00;"></div>
<div class="a" style="left:1316.81px;top:384.3px;width:9.2px;height:9.2px;background:#00ffff;"></div>
<div class="a" style="left:1326.84px;top:384.3px;width:9.2px;height:9.2px;background:#0000ff;"></div>
<div class="a" style="left:1336.87px;top:384.3px;width:9.2px;height:9.2px;background:#ff00ff;"></div>
<div class="a" style="left:1346.9px;top:384.3px;width:9.2px;height:9.2px;background:#c1272d;"></div>
<div class="a" style="left:1356.93px;top:384.3px;width:9.2px;height:9.2px;background:#ed1c24;"></div>
<div class="a" style="left:1366.96px;top:384.3px;width:9.2px;height:9.2px;background:#f15a24;"></div>
<div class="a" style="left:1376.99px;top:384.3px;width:9.2px;height:9.2px;background:#f7931e;"></div>
<div class="a" style="left:1387.02px;top:384.3px;width:9.2px;height:9.2px;background:#fbb03b;"></div>
<div class="a" style="left:1397.05px;top:384.3px;width:9.2px;height:9.2px;background:#fcee21;"></div>
<div class="a" style="left:1407.08px;top:384.3px;width:9.2px;height:9.2px;background:#d9e021;"></div>
<div class="a" style="left:1417.11px;top:384.3px;width:9.2px;height:9.2px;background:#8cc63f;"></div>
<div class="a" style="left:1427.14px;top:384.3px;width:9.2px;height:9.2px;background:#39b54a;"></div>
<div class="a" style="left:1437.17px;top:384.3px;width:9.2px;height:9.2px;background:#009245;"></div>
<div class="a" style="left:1246.6px;top:394.8px;width:9.2px;height:9.2px;background:#006837;"></div>
<div class="a" style="left:1256.63px;top:394.8px;width:9.2px;height:9.2px;background:#22b573;"></div>
<div class="a" style="left:1266.66px;top:394.8px;width:9.2px;height:9.2px;background:#00a99d;"></div>
<div class="a" style="left:1276.69px;top:394.8px;width:9.2px;height:9.2px;background:#29abe2;"></div>
<div class="a" style="left:1286.72px;top:394.8px;width:9.2px;height:9.2px;background:#0071bc;"></div>
<div class="a" style="left:1296.75px;top:394.8px;width:9.2px;height:9.2px;background:#2e3192;"></div>
<div class="a" style="left:1306.78px;top:394.8px;width:9.2px;height:9.2px;background:#1b1464;"></div>
<div class="a" style="left:1316.81px;top:394.8px;width:9.2px;height:9.2px;background:#662d91;"></div>
<div class="a" style="left:1326.84px;top:394.8px;width:9.2px;height:9.2px;background:#93278f;"></div>
<div class="a" style="left:1336.87px;top:394.8px;width:9.2px;height:9.2px;background:#9e005d;"></div>
<div class="a" style="left:1346.9px;top:394.8px;width:9.2px;height:9.2px;background:#d4145a;"></div>
<div class="a" style="left:1356.93px;top:394.8px;width:9.2px;height:9.2px;background:#ed1e79;"></div>
<div class="a" style="left:1366.96px;top:394.8px;width:9.2px;height:9.2px;background:#c7b299;"></div>
<div class="a" style="left:1376.99px;top:394.8px;width:9.2px;height:9.2px;background:#998675;"></div>
<div class="a" style="left:1387.02px;top:394.8px;width:9.2px;height:9.2px;background:#736357;"></div>
<div class="a" style="left:1397.05px;top:394.8px;width:9.2px;height:9.2px;background:#534741;"></div>
<div class="a" style="left:1407.08px;top:394.8px;width:9.2px;height:9.2px;background:#c69c6d;"></div>
<div class="a" style="left:1417.11px;top:394.8px;width:9.2px;height:9.2px;background:#a67c52;"></div>
<div class="a" style="left:1427.14px;top:394.8px;width:9.2px;height:9.2px;background:#8c6239;"></div>
<div class="a" style="left:1437.17px;top:394.8px;width:9.2px;height:9.2px;background:#754c24;"></div>
<div class="a" style="left:1246.6px;top:405.3px;width:9.2px;height:9.2px;background:#603813;"></div>
<div class="a" style="left:1256.63px;top:405.3px;width:9.2px;height:9.2px;background:#42210b;"></div>
<div class="a" style="left:1266.66px;top:405.3px;width:9.2px;height:9.2px;background:linear-gradient(90deg,#f4f4f4,#1a1a1a)"></div>
<div class="a" style="left:1276.69px;top:405.3px;width:9.2px;height:9.2px;background:linear-gradient(90deg,#cfe8f7,#2a8fd0)"></div>
<svg class="a" style="left:1286.72px;top:405.3px;" width="9.2" height="9.2" viewBox="0 0 9.2 9.2"><rect width="9.2" height="9.2" fill="#f5a0c0"/><circle cx="4.6" cy="4.6" r="1.8" fill="#fff" opacity=".45"/></svg>
<svg class="a" style="left:1296.75px;top:405.3px;" width="9.2" height="9.2" viewBox="0 0 9.2 9.2"><rect width="9.2" height="9.2" fill="#f7931e"/><circle cx="4.6" cy="4.6" r="1.8" fill="#fff" opacity=".45"/></svg>
<svg class="a" style="left:1306.78px;top:405.3px;" width="9.2" height="9.2" viewBox="0 0 9.2 9.2"><rect width="9.2" height="9.2" fill="#efe2c8"/><circle cx="4.6" cy="4.6" r="1.8" fill="#fff" opacity=".45"/></svg>
<svg class="a" style="left:1316.81px;top:405.3px;" width="9.2" height="9.2" viewBox="0 0 9.2 9.2"><rect width="9.2" height="9.2" fill="#5a90c8"/><circle cx="4.6" cy="4.6" r="1.8" fill="#fff" opacity=".45"/></svg>
<svg class="a" style="left:1326.84px;top:405.3px;" width="9.2" height="9.2" viewBox="0 0 9.2 9.2"><rect width="9.2" height="9.2" fill="#bfe6c0"/><circle cx="4.6" cy="4.6" r="1.8" fill="#fff" opacity=".45"/></svg>
<svg class="a" style="left:1336.87px;top:405.3px;" width="9.2" height="9.2" viewBox="0 0 9.2 9.2"><rect width="9.2" height="9.2" fill="#4fe0c8"/><path d="M9.2 5 L9.2 9.2 L5 9.2 Z" fill="#fff"/></svg>
<svg class="a" style="left:1346.9px;top:405.3px;" width="9.2" height="9.2" viewBox="0 0 9.2 9.2"><rect width="9.2" height="9.2" fill="#8feee4"/><path d="M9.2 5 L9.2 9.2 L5 9.2 Z" fill="#fff"/></svg>
<svg class="a" style="left:1356.93px;top:405.3px;" width="9.2" height="9.2" viewBox="0 0 9.2 9.2"><rect width="9.2" height="9.2" fill="#1f9a6a"/><path d="M9.2 5 L9.2 9.2 L5 9.2 Z" fill="#fff"/></svg>
<svg class="a" style="left:1366.96px;top:405.3px;" width="9.2" height="9.2" viewBox="0 0 9.2 9.2"><rect width="9.2" height="9.2" fill="#2fb088"/><path d="M9.2 5 L9.2 9.2 L5 9.2 Z" fill="#fff"/></svg>
<svg class="a" style="left:1376.99px;top:405.3px;" width="9.2" height="9.2" viewBox="0 0 9.2 9.2"><rect width="9.2" height="9.2" fill="#20242e"/><path d="M9.2 5 L9.2 9.2 L5 9.2 Z" fill="#fff"/></svg>
<svg class="a" style="left:1387.02px;top:405.3px;" width="9.2" height="9.2" viewBox="0 0 9.2 9.2"><rect x="0.5" y="0.5" width="8.2" height="8.2" fill="#262b37" stroke="#e8e8e8" stroke-width="1"/><path d="M8.6 5.4 L8.6 8.6 L5.4 8.6 Z" fill="#fff"/></svg>
<svg class="a" style="left:1397.05px;top:405.3px;" width="9.2" height="9.2" viewBox="0 0 9.2 9.2"><rect width="9.2" height="9.2" fill="#e01f30"/><path d="M9.2 5 L9.2 9.2 L5 9.2 Z" fill="#fff"/></svg>
<svg class="a" style="left:1407.08px;top:405.3px;" width="9.2" height="9.2" viewBox="0 0 9.2 9.2"><rect width="9.2" height="9.2" fill="#ef3d4f"/><path d="M9.2 5 L9.2 9.2 L5 9.2 Z" fill="#fff"/></svg>
<svg class="a" style="left:1246.6px;top:416.3px;" width="9.2" height="9.2" viewBox="0 0 9.2 9.2"><path d="M0.6 2.4 L3.6 2.4 L4.6 3.6 L8.6 3.6 L8.6 8 L0.6 8 Z" fill="#c4c4c4"/></svg>
<div class="a" style="left:1256.63px;top:416.3px;width:9.2px;height:9.2px;background:#000000;"></div>
<div class="a" style="left:1266.66px;top:416.3px;width:9.2px;height:9.2px;background:#1a1a1a;"></div>
<div class="a" style="left:1276.69px;top:416.3px;width:9.2px;height:9.2px;background:#333333;"></div>
<div class="a" style="left:1286.72px;top:416.3px;width:9.2px;height:9.2px;background:#4d4d4d;"></div>
<div class="a" style="left:1296.75px;top:416.3px;width:9.2px;height:9.2px;background:#666666;"></div>
<div class="a" style="left:1306.78px;top:416.3px;width:9.2px;height:9.2px;background:#808080;"></div>
<div class="a" style="left:1316.81px;top:416.3px;width:9.2px;height:9.2px;background:#999999;"></div>
<div class="a" style="left:1326.84px;top:416.3px;width:9.2px;height:9.2px;background:#b3b3b3;"></div>
<div class="a" style="left:1336.87px;top:416.3px;width:9.2px;height:9.2px;background:#cccccc;"></div>
<div class="a" style="left:1346.9px;top:416.3px;width:9.2px;height:9.2px;background:#e6e6e6;"></div>
<div class="a" style="left:1356.93px;top:416.3px;width:9.2px;height:9.2px;background:#f4f4f4;"></div>
<svg class="a" style="left:1246.6px;top:427.6px;" width="9.2" height="9.2" viewBox="0 0 9.2 9.2"><path d="M0.6 2.4 L3.6 2.4 L4.6 3.6 L8.6 3.6 L8.6 8 L0.6 8 Z" fill="#c4c4c4"/></svg>
<div class="a" style="left:1256.63px;top:427.6px;width:9.2px;height:9.2px;background:#3fa9f5;"></div>
<div class="a" style="left:1266.66px;top:427.6px;width:9.2px;height:9.2px;background:#7ac943;"></div>
<div class="a" style="left:1276.69px;top:427.6px;width:9.2px;height:9.2px;background:#ff931e;"></div>
<div class="a" style="left:1286.72px;top:427.6px;width:9.2px;height:9.2px;background:#ed1c24;"></div>
<div class="a" style="left:1296.75px;top:427.6px;width:9.2px;height:9.2px;background:#ff7bac;"></div>
<div class="a" style="left:1306.78px;top:427.6px;width:9.2px;height:9.2px;background:#bdccd4;"></div>
<svg class="a" style="left:1250px;top:479px;" width="12" height="9" viewBox="0 0 12 9"><rect x="0.5" y="1" width="1.6" height="7" fill="#bdbdbd"/><rect x="3" y="1" width="1.6" height="7" fill="#bdbdbd"/><path d="M5.6 1.4 L7.4 1 L8.8 7.6 L7 8 Z" fill="#bdbdbd"/><rect x="10" y="6.8" width="1.4" height="1.4" fill="#bdbdbd"/></svg>
<svg class="a" style="left:1269.5px;top:479px;" width="10" height="9" viewBox="0 0 10 9"><path d="M8 0.8 L3 4.5 L8 8.2" fill="none" stroke="#bdbdbd" stroke-width="1.5"/><path d="M4.6 2.6 L1 4.5 L4.6 6.4" fill="none" stroke="#bdbdbd" stroke-width="1.1"/></svg>
<svg class="a" style="left:1288px;top:478.6px;" width="9.4" height="9.4" viewBox="0 0 9.4 9.4"><rect x="0.6" y="0.6" width="8.2" height="8.2" fill="none" stroke="#bdbdbd" stroke-width="1.1"/><rect x="1.6" y="1.6" width="2.8" height="2.8" fill="#bdbdbd"/><rect x="5" y="5" width="2.8" height="2.8" fill="#bdbdbd"/></svg>
<svg class="a" style="left:1361px;top:479px;" width="12" height="9" viewBox="0 0 12 9"><rect x="0.5" y="0.5" width="7.4" height="7.4" fill="#a8a8a8"/><rect x="2" y="2" width="2" height="2" fill="#666"/><rect x="10" y="6.8" width="1.4" height="1.4" fill="#bdbdbd"/></svg>
<svg class="a" style="left:1380px;top:479px;" width="9.4" height="9" viewBox="0 0 9.4 9"><rect x="0.6" y="0.6" width="8" height="7.8" fill="none" stroke="#bdbdbd" stroke-width="1"/><path d="M0.6 3 L8.6 3 M3.2 3 L3.2 8.4 M0.6 5.6 L8.6 5.6" stroke="#bdbdbd" stroke-width=".9"/></svg>
<svg class="a" style="left:1398px;top:479.4px;" width="10.4" height="8.4" viewBox="0 0 10.4 8.4"><path d="M0.5 1 L3.8 1 L4.8 2.2 L9.8 2.2 L9.8 7.8 L0.5 7.8 Z" fill="#bdbdbd"/></svg>
<svg class="a" style="left:1418px;top:478.8px;" width="9.4" height="9.4" viewBox="0 0 9.4 9.4"><rect x="0.6" y="0.6" width="8.2" height="8.2" fill="none" stroke="#bdbdbd" stroke-width="1.1"/><path d="M4.7 2.6 L4.7 6.8 M2.6 4.7 L6.8 4.7" stroke="#bdbdbd" stroke-width="1.1"/></svg>
<div class="a" style="left:1437px;top:479.6px;width:3px;height:8px;background:#8a8a8a;"></div>
<!-- stroke panel -->
<div class="a" style="left:1243.5px;top:493.6px;width:196.5px;height:17.8px;background:#3e3e3e;"></div>
<div class="a" style="left:1244.3px;top:494.4px;width:38px;height:17.2px;background:#4a4a4a;"></div>
<svg class="a" style="left:1247px;top:499.5px;" width="4" height="5" viewBox="0 0 4 5"><path d="M2 0.4 L3.6 2 L0.4 2 Z M2 4.6 L3.6 3 L0.4 3 Z" fill="#777"/></svg>
<span class="t" style="left:1253px;top:497.3px;font-size:8.5px;line-height:10.5px;font-weight:bold;color:#f0f0f0;transform:scaleX(0.896);">Stroke</span>
<span class="t" style="left:1289px;top:497.3px;font-size:8.5px;line-height:10.5px;font-weight:bold;color:#a0a0a0;transform:scaleX(0.887);">Gradient</span>
<span class="t" style="left:1334px;top:497.3px;font-size:8.5px;line-height:10.5px;font-weight:bold;color:#a0a0a0;transform:scaleX(0.886);">Transparency</span>
<span class="t" style="left:1265px;top:519.8px;font-size:8px;line-height:10px;font-weight:normal;color:#cfcfcf;transform:scaleX(0.964);">Weight:</span>
<svg class="a" style="left:1296px;top:518.5px;" width="8" height="11" viewBox="0 0 8 11"><path d="M1.6 4 L4 1.6 L6.4 4 M1.6 7 L4 9.4 L6.4 7" fill="none" stroke="#c8c8c8" stroke-width="1.1" stroke-linecap="round" stroke-linejoin="round"/></svg>
<div class="a" style="left:1308.8px;top:518px;width:40px;height:12.6px;background:#424242;"></div>
<svg class="a" style="left:1350.6px;top:521.4px;" width="8" height="6" viewBox="0 0 8 6"><path d="M1.7 1.85 L4 4.15 L6.3 1.85" fill="none" stroke="#dcdcdc" stroke-width="1.3" stroke-linecap="round" stroke-linejoin="round"/></svg>
<span class="t" style="left:1275px;top:538.8px;font-size:8px;line-height:10px;font-weight:normal;color:#767676;transform:scaleX(0.740);">Cap:</span>
<span class="t" style="left:1264.5px;top:558px;font-size:8px;line-height:10px;font-weight:normal;color:#767676;transform:scaleX(0.862);">Corner:</span>
<span class="t" style="left:1400px;top:558px;font-size:8px;line-height:10px;font-weight:normal;color:#767676;transform:scaleX(0.942);">Limit:</span>
<div class="a" style="left:1424px;top:556.5px;width:16px;height:12px;background:#505050;"></div>
<span class="t" style="left:1247.5px;top:577.2px;font-size:8px;line-height:10px;font-weight:normal;color:#767676;transform:scaleX(0.882);">Align Stroke:</span>
<svg class="a" style="left:1296.2px;top:538.9px;" width="9" height="9" viewBox="0 0 9 9"><path d="M1 2.4 L8 2.4 L8 6.6 L1 6.6 Z" fill="none" stroke="#737373" stroke-width="1"/><path d="M2.4 8 L6.6 8" stroke="#6d6d6d" stroke-width=".9"/></svg>
<svg class="a" style="left:1312.8px;top:538.9px;" width="9" height="9" viewBox="0 0 9 9"><path d="M1 2.4 L8 2.4 L8 6.6 L1 6.6 Z" fill="none" stroke="#737373" stroke-width="1"/><path d="M2.4 8 L6.6 8" stroke="#6d6d6d" stroke-width=".9"/></svg>
<svg class="a" style="left:1329px;top:538.9px;" width="9" height="9" viewBox="0 0 9 9"><path d="M1 2.4 L8 2.4 L8 6.6 L1 6.6 Z" fill="none" stroke="#737373" stroke-width="1"/><path d="M2.4 8 L6.6 8" stroke="#6d6d6d" stroke-width=".9"/></svg>
<svg class="a" style="left:1296.2px;top:558.1px;" width="9" height="9" viewBox="0 0 9 9"><path d="M1 2.4 L8 2.4 L8 6.6 L1 6.6 Z" fill="none" stroke="#737373" stroke-width="1"/><path d="M2.4 8 L6.6 8" stroke="#6d6d6d" stroke-width=".9"/></svg>
<svg class="a" style="left:1312.8px;top:558.1px;" width="9" height="9" viewBox="0 0 9 9"><path d="M1 2.4 L8 2.4 L8 6.6 L1 6.6 Z" fill="none" stroke="#737373" stroke-width="1"/><path d="M2.4 8 L6.6 8" stroke="#6d6d6d" stroke-width=".9"/></svg>
<svg class="a" style="left:1329px;top:558.1px;" width="9" height="9" viewBox="0 0 9 9"><path d="M1 2.4 L8 2.4 L8 6.6 L1 6.6 Z" fill="none" stroke="#737373" stroke-width="1"/><path d="M2.4 8 L6.6 8" stroke="#6d6d6d" stroke-width=".9"/></svg>
<svg class="a" style="left:1296.2px;top:577.3px;" width="9" height="9" viewBox="0 0 9 9"><path d="M1 2.4 L8 2.4 L8 6.6 L1 6.6 Z" fill="none" stroke="#737373" stroke-width="1"/><path d="M2.4 8 L6.6 8" stroke="#6d6d6d" stroke-width=".9"/></svg>
<svg class="a" style="left:1312.8px;top:577.3px;" width="9" height="9" viewBox="0 0 9 9"><path d="M1 2.4 L8 2.4 L8 6.6 L1 6.6 Z" fill="none" stroke="#737373" stroke-width="1"/><path d="M2.4 8 L6.6 8" stroke="#6d6d6d" stroke-width=".9"/></svg>
<svg class="a" style="left:1329px;top:577.3px;" width="9" height="9" viewBox="0 0 9 9"><path d="M1 2.4 L8 2.4 L8 6.6 L1 6.6 Z" fill="none" stroke="#737373" stroke-width="1"/><path d="M2.4 8 L6.6 8" stroke="#6d6d6d" stroke-width=".9"/></svg>
<svg class="a" style="left:1246.6px;top:601.7px;" width="8.6" height="9" viewBox="0 0 8.6 9"><rect x="0.3" y="0.3" width="8" height="8.4" rx="1.2" fill="#dcdcdc"/><path d="M2 4.5 L6.6 4.5" stroke="#555" stroke-width="1.6"/></svg>
<span class="t" style="left:1259px;top:601.8px;font-size:8px;line-height:10px;font-weight:bold;color:#e0e0e0;transform:scaleX(0.883);">Dashed Line</span>
<svg class="a" style="left:1409px;top:600.5px;" width="31" height="12" viewBox="0 0 31 12"><path d="M1 3 L10 3 M14 3 L22 3 M1 8.6 L7 8.6 M10 8.6 L17 8.6" stroke="#666" stroke-width="1" stroke-dasharray="2 1.4"/><rect x="24" y="1" width="6" height="9" fill="none" stroke="#626262" stroke-width=".8"/></svg>
<div class="a" style="left:1250px;top:618px;width:23px;height:12px;background:#505050;"></div>
<div class="a" style="left:1286.5px;top:618px;width:22px;height:12px;background:#505050;"></div>
<div class="a" style="left:1323px;top:618px;width:22px;height:12px;background:#505050;"></div>
<div class="a" style="left:1360px;top:618px;width:23px;height:12px;background:#505050;"></div>
<div class="a" style="left:1393.5px;top:618px;width:23px;height:12px;background:#505050;"></div>
<div class="a" style="left:1433px;top:618px;width:7px;height:12px;background:#505050;"></div>
<span class="t" style="left:1255.5px;top:633.1px;font-size:8px;line-height:10px;font-weight:normal;color:#6c6c6c;transform:scaleX(0.807);">dash</span>
<span class="t" style="left:1292.2px;top:633.1px;font-size:8px;line-height:10px;font-weight:normal;color:#6c6c6c;transform:scaleX(0.862);">gap</span>
<span class="t" style="left:1327px;top:633.1px;font-size:8px;line-height:10px;font-weight:normal;color:#6c6c6c;transform:scaleX(0.807);">dash</span>
<span class="t" style="left:1363.5px;top:633.1px;font-size:8px;line-height:10px;font-weight:normal;color:#6c6c6c;transform:scaleX(0.862);">gap</span>
<span class="t" style="left:1399px;top:633.1px;font-size:8px;line-height:10px;font-weight:normal;color:#6c6c6c;transform:scaleX(0.807);">dash</span>
<span class="t" style="left:1431.8px;top:633.1px;font-size:8px;line-height:10px;font-weight:normal;color:#6c6c6c;transform:scaleX(0.862);">gap</span>
<span class="t" style="left:1248px;top:655.6px;font-size:8px;line-height:10px;font-weight:normal;color:#767676;transform:scaleX(0.880);">Arrowheads:</span>
<div class="a" style="left:1293px;top:652.5px;width:31.5px;height:15.2px;background:#6a6a6a;"></div>
<div class="a" style="left:1344px;top:652.5px;width:32px;height:15.2px;background:#6a6a6a;"></div>
<div class="a" style="left:1330px;top:657px;width:8px;height:6px;background:#4f4f4f;"></div>
<span class="t" style="left:1272.5px;top:677.3px;font-size:8px;line-height:10px;font-weight:normal;color:#767676;transform:scaleX(0.675);">Scale:</span>
<div class="a" style="left:1295px;top:675.5px;width:40px;height:12px;background:#4f4f4f;"></div>
<div class="a" style="left:1348px;top:675.5px;width:40px;height:12px;background:#4f4f4f;"></div>
<span class="t" style="left:1272.5px;top:698.1px;font-size:8px;line-height:10px;font-weight:normal;color:#767676;transform:scaleX(0.750);">Align:</span>
<svg class="a" style="left:1296px;top:698.5px;" width="24" height="8" viewBox="0 0 24 8"><path d="M0.5 2 L9 2 M0.5 5.6 L9 5.6 M14 2 L23 2 M14 5.6 L23 5.6" stroke="#6c6c6c" stroke-width="1"/></svg>
<span class="t" style="left:1266.7px;top:722.3px;font-size:8px;line-height:10px;font-weight:normal;color:#767676;transform:scaleX(0.835);">Profile:</span>
<div class="a" style="left:1293px;top:720px;width:66.5px;height:15.2px;background:#6a6a6a;"></div>
<div class="a" style="left:1361px;top:722px;width:10px;height:11px;background:#505050;"></div>
<div class="a" style="left:1431px;top:722px;width:9px;height:11px;background:#525252;"></div>
<!-- layers panel -->
<div class="a" style="left:1243.5px;top:741.6px;width:196.5px;height:18.6px;background:#3e3e3e;"></div>
<div class="a" style="left:1291px;top:742.4px;width:38px;height:18px;background:#4a4a4a;"></div>
<span class="t" style="left:1249px;top:746.6px;font-size:8.5px;line-height:10.5px;font-weight:bold;color:#a0a0a0;transform:scaleX(0.911);">Artboards</span>
<span class="t" style="left:1299px;top:746.6px;font-size:8.5px;line-height:10.5px;font-weight:bold;color:#f2f2f2;transform:scaleX(0.883);">Layers</span>
<span class="t" style="left:1336px;top:746.6px;font-size:8.5px;line-height:10.5px;font-weight:bold;color:#a0a0a0;transform:scaleX(0.877);">Libraries</span>
<div class="a" style="left:1243.5px;top:760.2px;width:196.5px;height:1px;background:#444;"></div>
<div class="a" style="left:1276.6px;top:765.8px;width:3.4px;height:15.4px;background:#4ce04c;"></div>
<svg class="a" style="left:1248.6px;top:770.3px;" width="9.4" height="6.8" viewBox="0 0 9.4 6.8"><path d="M0.4 3.4 C2.4 0.2 7 0.2 9 3.4 C7 6.6 2.4 6.6 0.4 3.4 Z" fill="none" stroke="#d0d0d0" stroke-width="1"/><circle cx="4.7" cy="3.4" r="1.6" fill="#d0d0d0"/></svg>
<svg class="a" style="left:1283.8px;top:769.7px;" width="6" height="8" viewBox="0 0 6 8"><path d="M1.9 1.8 L4.1 4 L1.9 6.2" fill="none" stroke="#dcdcdc" stroke-width="1.3" stroke-linecap="round" stroke-linejoin="round"/></svg>
<svg class="a" style="left:1298.8px;top:768.1px;" width="11.6" height="11" viewBox="0 0 11.6 11"><rect width="11.6" height="11" fill="#f2f2f2"/><path d="M3 7 C3 3.6 8 3 9 6.6 L9 8 L3 8 Z" fill="none" stroke="#9a9aa0" stroke-width=".7"/></svg>
<span class="t" style="left:1314.7px;top:769.1px;font-size:8.5px;line-height:10.5px;font-weight:bold;color:#dedede;transform:scaleX(0.847);">Outline</span>
<div class="a" style="left:1434px;top:771.7px;width:6px;height:4px;background:#585858;"></div>
<div class="a" style="left:1247.5px;top:780.6px;width:192.5px;height:15.8px;background:#475f7d;"></div>
<div class="a" style="left:1276.6px;top:780.8px;width:3.4px;height:15.4px;background:#3b3bd0;"></div>
<svg class="a" style="left:1248.6px;top:785.3px;" width="9.4" height="6.8" viewBox="0 0 9.4 6.8"><path d="M0.4 3.4 C2.4 0.2 7 0.2 9 3.4 C7 6.6 2.4 6.6 0.4 3.4 Z" fill="none" stroke="#d0d0d0" stroke-width="1"/><circle cx="4.7" cy="3.4" r="1.6" fill="#d0d0d0"/></svg>
<svg class="a" style="left:1283.8px;top:784.7px;" width="6" height="8" viewBox="0 0 6 8"><path d="M1.9 1.8 L4.1 4 L1.9 6.2" fill="none" stroke="#dcdcdc" stroke-width="1.3" stroke-linecap="round" stroke-linejoin="round"/></svg>
<svg class="a" style="left:1298.8px;top:783.1px;" width="11.6" height="11" viewBox="0 0 11.6 11"><rect width="11.6" height="11" fill="#f2f2f2"/><path d="M1.6 9 C1.2 3.4 4.6 1.6 6.6 1.6 C9.4 1.6 10.6 5 10 9 Z" fill="#ee3a50"/><rect x="1.4" y="8.6" width="9" height="1.6" fill="#d03048"/></svg>
<span class="t" style="left:1314.7px;top:784.1px;font-size:8.5px;line-height:10.5px;font-weight:bold;color:#dedede;transform:scaleX(0.833);">Colour</span>
<div class="a" style="left:1434px;top:786.7px;width:6px;height:4px;background:#585858;"></div>
<div class="a" style="left:1276.6px;top:795.8px;width:3.4px;height:15.4px;background:#4a6fd6;"></div>
<svg class="a" style="left:1265.6px;top:799.5px;" width="6.4" height="8.2" viewBox="0 0 6.4 8.2"><rect x="0.3" y="3.4" width="5.8" height="4.6" fill="#c4c4c4"/><path d="M1.5 3.6 L1.5 2.4 C1.5 0.2 4.9 0.2 4.9 2.4 L4.9 3.6" fill="none" stroke="#c4c4c4" stroke-width="1"/></svg>
<svg class="a" style="left:1283.8px;top:799.7px;" width="6" height="8" viewBox="0 0 6 8"><path d="M1.9 1.8 L4.1 4 L1.9 6.2" fill="none" stroke="#dcdcdc" stroke-width="1.3" stroke-linecap="round" stroke-linejoin="round"/></svg>
<svg class="a" style="left:1298.8px;top:798.1px;" width="11.6" height="11" viewBox="0 0 11.6 11"><rect width="11.6" height="11" fill="#a9a9a4"/><path d="M5.8 0 L5.8 11" stroke="#8f8f8a" stroke-width=".8"/></svg>
<span class="t" style="left:1314.7px;top:799.1px;font-size:8.5px;line-height:10.5px;font-weight:bold;color:#dedede;transform:scaleX(0.861);">Template</span>
<div class="a" style="left:1434px;top:801.7px;width:6px;height:4px;background:#585858;"></div>
<div class="a" style="left:1276.6px;top:810.8px;width:3.4px;height:15.4px;background:#d23a44;"></div>
<svg class="a" style="left:1248.6px;top:815.3px;" width="9.4" height="6.8" viewBox="0 0 9.4 6.8"><path d="M0.4 3.4 C2.4 0.2 7 0.2 9 3.4 C7 6.6 2.4 6.6 0.4 3.4 Z" fill="none" stroke="#d0d0d0" stroke-width="1"/><circle cx="4.7" cy="3.4" r="1.6" fill="#d0d0d0"/></svg>
<svg class="a" style="left:1265.6px;top:814.5px;" width="6.4" height="8.2" viewBox="0 0 6.4 8.2"><rect x="0.3" y="3.4" width="5.8" height="4.6" fill="#c4c4c4"/><path d="M1.5 3.6 L1.5 2.4 C1.5 0.2 4.9 0.2 4.9 2.4 L4.9 3.6" fill="none" stroke="#c4c4c4" stroke-width="1"/></svg>
<svg class="a" style="left:1283.8px;top:814.7px;" width="6" height="8" viewBox="0 0 6 8"><path d="M1.9 1.8 L4.1 4 L1.9 6.2" fill="none" stroke="#dcdcdc" stroke-width="1.3" stroke-linecap="round" stroke-linejoin="round"/></svg>
<svg class="a" style="left:1298.8px;top:813.1px;" width="11.6" height="11" viewBox="0 0 11.6 11"><rect width="11.6" height="11" fill="#f4f4f4"/><path d="M2 4 L5 4 L5.6 6 L9.6 6 L9.6 9 L2 9 Z" fill="#c8c8c8"/></svg>
<span class="t" style="left:1314.7px;top:814.1px;font-size:8.5px;line-height:10.5px;font-weight:bold;color:#dedede;transform:scaleX(0.796);">Logos</span>
<div class="a" style="left:1434px;top:816.7px;width:6px;height:4px;background:#585858;"></div>
<div class="a" style="left:1243.5px;top:884.5px;width:196.5px;height:14.5px;background:#4a4a4a;"></div>
<span class="t" style="left:1245.8px;top:886.6px;font-size:8.5px;line-height:10.5px;font-weight:bold;color:#c6c6c6;transform:scaleX(0.832);">4 Layers</span>
<svg class="a" style="left:1343px;top:886px;" width="10" height="10" viewBox="0 0 10 10"><rect x="0.6" y="2.6" width="6.6" height="6.6" fill="none" stroke="#bdbdbd" stroke-width="1.1"/><path d="M4.4 5.4 L9 0.8 M6 0.6 L9.2 0.6 L9.2 3.8" fill="none" stroke="#bdbdbd" stroke-width="1.1"/></svg>
<svg class="a" style="left:1362px;top:887px;" width="8" height="9" viewBox="0 0 8 9"><circle cx="3.4" cy="3.4" r="2.4" fill="none" stroke="#666" stroke-width="1"/><path d="M5 5 L7.4 8" stroke="#666" stroke-width="1.1"/></svg>
<svg class="a" style="left:1379px;top:886.6px;" width="9" height="9" viewBox="0 0 9 9"><rect x="0.5" y="0.5" width="7" height="7" fill="#8c8c8c" stroke="#bdbdbd" stroke-width=".8"/><circle cx="4" cy="4" r="1.7" fill="#d8d8d8"/></svg>
<svg class="a" style="left:1396.6px;top:887px;" width="13" height="9" viewBox="0 0 13 9"><path d="M0.6 1 L0.6 3.6 L3 3.6" fill="none" stroke="#bdbdbd" stroke-width="1.1"/><rect x="4.6" y="1.6" width="7.6" height="6.6" fill="none" stroke="#bdbdbd" stroke-width="1"/><path d="M8.4 1.6 L8.4 8.2 M4.6 4.9 L12.2 4.9" stroke="#bdbdbd" stroke-width=".8"/></svg>
<svg class="a" style="left:1418px;top:886.6px;" width="9.4" height="9.4" viewBox="0 0 9.4 9.4"><rect x="0.6" y="0.6" width="8.2" height="8.2" fill="none" stroke="#bdbdbd" stroke-width="1.1"/><path d="M4.7 2.6 L4.7 6.8 M2.6 4.7 L6.8 4.7" stroke="#bdbdbd" stroke-width="1.1"/></svg>
<div class="a" style="left:1437px;top:887.6px;width:3px;height:8px;background:#8a8a8a;"></div>
<!-- desktop strip + macOS dock -->
<svg class="a" style="left:0;top:898.6px" width="1440" height="46" viewBox="0 0 1440 46"><defs><filter id="water" x="0" y="0" width="100%" height="100%" color-interpolation-filters="sRGB"><feTurbulence type="fractalNoise" baseFrequency="0.045 0.2" numOctaves="3" seed="11"/><feColorMatrix type="matrix" values="0.12 0 0 0 -0.012  0.18 0 0 0 0.05  0.24 0 0 0 0.135  0 0 0 0 1"/></filter><linearGradient id="dskv" x1="0" y1="0" x2="0" y2="1"><stop offset="0" stop-color="#020a14" stop-opacity=".75"/><stop offset=".3" stop-color="#020a14" stop-opacity=".2"/><stop offset="1" stop-color="#020a14" stop-opacity="0"/></linearGradient><linearGradient id="dsk" x1="0" x2="1"><stop offset="0" stop-color="#8c96a6" stop-opacity="0"/><stop offset=".75" stop-color="#8c96a6" stop-opacity="0"/><stop offset=".82" stop-color="#8c96a6" stop-opacity=".1"/><stop offset="1" stop-color="#8c96a6" stop-opacity=".1"/></linearGradient></defs><rect width="1440" height="46" fill="#0c2442"/><rect width="1440" height="46" filter="url(#water)"/><rect width="1440" height="46" fill="url(#dskv)"/><rect width="1440" height="46" fill="url(#dsk)"/></svg>
<div class="a" style="left:0px;top:898.4px;width:1440px;height:1.2px;background:#1c2530;"></div>
<div class="a" style="left:330.6px;top:898.6px;width:802.8px;height:45.8px;background:#3e5b7e;box-shadow:inset 0 1px 0 rgba(120,150,190,.18)"></div>
<div class="a" style="left:943px;top:903px;width:1px;height:37px;background:#35506f;"></div>
<div class="a" style="left:1082.5px;top:903px;width:1px;height:37px;background:#35506f;"></div>
<div class="a" style="left:352px;top:941.8px;width:2px;height:2px;background:#10151c;border-radius:50%"></div>
<div class="a" style="left:472.3px;top:941.8px;width:2px;height:2px;background:#10151c;border-radius:50%"></div>
<div class="a" style="left:833.7px;top:941.8px;width:2px;height:2px;background:#10151c;border-radius:50%"></div>
<div class="a" style="left:873.7px;top:941.8px;width:2px;height:2px;background:#10151c;border-radius:50%"></div>
<div class="a" style="left:913.7px;top:941.8px;width:2px;height:2px;background:#10151c;border-radius:50%"></div>
<div class="a" style="left:971.5px;top:941.8px;width:2px;height:2px;background:#10151c;border-radius:50%"></div>
<div class="a" style="left:1011.5px;top:941.8px;width:2px;height:2px;background:#10151c;border-radius:50%"></div>
<div class="a" style="left:1052px;top:941.8px;width:2px;height:2px;background:#10151c;border-radius:50%"></div>
<svg class="a" style="left:0;top:0;filter:blur(.45px)" width="1440" height="1080" viewBox="0 0 1440 1080"><defs>
<linearGradient id="gFinder" x1="0" y1="0" x2="0" y2="1"><stop offset="0" stop-color="#27b7f9"/><stop offset="1" stop-color="#1d62ee"/></linearGradient>
<linearGradient id="gGray" x1="0" y1="0" x2="0" y2="1"><stop offset="0" stop-color="#d2d5d8"/><stop offset="1" stop-color="#84888d"/></linearGradient>
<linearGradient id="gPref" x1="0" y1="0" x2="0" y2="1"><stop offset="0" stop-color="#c9cacc"/><stop offset="1" stop-color="#8b8a88"/></linearGradient>
<linearGradient id="gSafari" x1="0" y1="0" x2="0" y2="1"><stop offset="0" stop-color="#22b4f6"/><stop offset="1" stop-color="#1a63de"/></linearGradient>
<linearGradient id="gStore" x1="0" y1="0" x2="0" y2="1"><stop offset="0" stop-color="#1fb6fb"/><stop offset="1" stop-color="#1a55e6"/></linearGradient>
<linearGradient id="gPod" x1="0" y1="0" x2="0" y2="1"><stop offset="0" stop-color="#b43af0"/><stop offset="1" stop-color="#6a12b8"/></linearGradient>
<linearGradient id="gNote" x1="0" y1="0" x2="1" y2="1"><stop offset="0" stop-color="#f9527a"/><stop offset=".5" stop-color="#b060d8"/><stop offset="1" stop-color="#38a8f4"/></linearGradient>
<linearGradient id="gQT" x1="0" y1="0" x2="0" y2="1"><stop offset="0" stop-color="#1f7ff0"/><stop offset="1" stop-color="#25c4fa"/></linearGradient>
<linearGradient id="gStack" x1="0" y1="0" x2="0" y2="1"><stop offset="0" stop-color="#2a39b8"/><stop offset="1" stop-color="#2a2aa0"/></linearGradient>
<linearGradient id="gTrash" x1="0" y1="0" x2="1" y2="0"><stop offset="0" stop-color="#c4c6c8"/><stop offset=".5" stop-color="#e2e3e4"/><stop offset="1" stop-color="#bcbec0"/></linearGradient>
</defs><g transform="translate(336 903.5)"><rect x="1.2" y="2.6" width="31.6" height="29" rx="2.5" fill="#e4ebf3"/><path d="M1.2 5.1 C1.2 3.6 2.3 2.6 3.7 2.6 L18.5 2.6 C16 9 15 14 14.6 19.6 L19.6 19.6 C19.4 24 19.8 28 20.6 31.6 L3.7 31.6 C2.3 31.6 1.2 30.6 1.2 29.1 Z" fill="url(#gFinder)"/><path d="M8 22.4 C12 26.6 22 26.6 26 22.2" fill="none" stroke="#1c4fb0" stroke-width="1.2" stroke-linecap="round"/><path d="M9.6 10.4 L9.6 13.6 M24 10.4 L24 13.6" stroke="#34506e" stroke-width="1.2" stroke-linecap="round"/></g><g transform="translate(376 903.5)"><rect x="0.4" y="1.6" width="33.2" height="30.6" rx="2" fill="url(#gPref)"/><circle cx="17" cy="16.6" r="12.6" fill="none" stroke="#38383a" stroke-width="3.4" stroke-dasharray="2.2 1.4"/><circle cx="17" cy="16.6" r="10.2" fill="#6f6f70" stroke="#2f2f31" stroke-width="2.6"/><circle cx="17" cy="16.6" r="2.6" fill="#2f2f31"/><path d="M17 16.6 L17 7 M17 16.6 L25.4 21.4 M17 16.6 L8.6 21.4" stroke="#2f2f31" stroke-width="2.2"/></g><g transform="translate(416.3 903.5)"><circle cx="17" cy="17" r="16.6" fill="url(#gGray)" stroke="#e4e6e8" stroke-width=".8"/><path d="M25.8 7.6 C21 8 16.6 11 13.8 15.8 L11.6 21.6 L13.4 23.2 L18.8 20 C23 16.8 25.6 12.4 25.8 7.6 Z" fill="#3b3e44"/><path d="M13.4 15.4 L8.6 17.6 L11.4 19.4 Z M18.6 20.4 L17.2 25.6 L15 23 Z M11 22 L8.6 26 L12.6 23.6 Z" fill="#3b3e44"/></g><g transform="translate(456.3 903.5)"><circle cx="17" cy="17" r="16.4" fill="#eef3f8"/><circle cx="17" cy="17" r="14.8" fill="url(#gSafari)"/><path d="M26.6 7.4 L18.4 18.4 L15.6 15.6 Z" fill="#f03438"/><path d="M7.4 26.6 L15.6 15.6 L18.4 18.4 Z" fill="#f2f4f6"/></g><g transform="translate(496 902.6)"><g transform="rotate(-4 17 17)"><rect x="3" y="3" width="28" height="28.4" rx="2.2" fill="#f6f6f6"/><path d="M3 5.2 C3 4 4 3 5.2 3 L28.8 3 C30 3 31 4 31 5.2 L31 10.4 L3 10.4 Z" fill="#ea3440"/><rect x="3.4" y="29.6" width="27.4" height="2.4" fill="#3a3a3a" opacity=".55"/></g></g><g transform="translate(536.6 903.2)"><g transform="rotate(-8 17 17)"><rect x="2.6" y="1.4" width="28.6" height="31.4" rx="1.2" fill="#f6f3ea"/><rect x="2.6" y="1.4" width="28.6" height="5.2" fill="#f8ce3c"/></g></g><g transform="translate(576.3 903.5)"><circle cx="17" cy="17" r="16.6" fill="#f4f4f4"/><ellipse cx="17" cy="10" rx="4" ry="6.4" fill="#f6b23a" opacity=".88" transform="rotate(0 17 17)"/><ellipse cx="17" cy="10" rx="4" ry="6.4" fill="#e8d640" opacity=".88" transform="rotate(45 17 17)"/><ellipse cx="17" cy="10" rx="4" ry="6.4" fill="#8acc48" opacity=".88" transform="rotate(90 17 17)"/><ellipse cx="17" cy="10" rx="4" ry="6.4" fill="#48b868" opacity=".88" transform="rotate(135 17 17)"/><ellipse cx="17" cy="10" rx="4" ry="6.4" fill="#48a8d8" opacity=".88" transform="rotate(180 17 17)"/><ellipse cx="17" cy="10" rx="4" ry="6.4" fill="#8a78d8" opacity=".88" transform="rotate(225 17 17)"/><ellipse cx="17" cy="10" rx="4" ry="6.4" fill="#c868b8" opacity=".88" transform="rotate(270 17 17)"/><ellipse cx="17" cy="10" rx="4" ry="6.4" fill="#ee5a4a" opacity=".88" transform="rotate(315 17 17)"/><circle cx="17" cy="17" r="1.6" fill="#fff"/></g><g transform="translate(617 903.5)"><ellipse cx="17" cy="14.6" rx="16.4" ry="13.4" fill="#2f9ff4"/><path d="M8 24 L7 30 L14 26 Z" fill="#2f9ff4"/><ellipse cx="23" cy="24" rx="10" ry="7.4" fill="#f4f6f8"/><path d="M27 29.6 L29.4 33 L23.6 31 Z" fill="#f4f6f8"/><circle cx="18.6" cy="24" r="1.4" fill="#30343a"/><circle cx="23" cy="24" r="1.4" fill="#30343a"/><circle cx="27.4" cy="24" r="1.4" fill="#30343a"/></g><g transform="translate(657.2 903.5)"><circle cx="17" cy="17" r="16.6" fill="#f4f3f6"/><path d="M13.2 9.6 L24 7.4 L24 21.6 C24 25.4 18.4 25.6 18.4 22.6 C18.4 20.4 21 19.8 22.2 20.2 L22.2 11.6 L15 13 L15 23.6 C15 27.4 9.4 27.6 9.4 24.6 C9.4 22.4 12 21.8 13.2 22.2 Z" fill="url(#gNote)"/></g><g transform="translate(697.2 903.5)"><circle cx="17" cy="17" r="16.6" fill="url(#gPod)"/><circle cx="17" cy="15" r="9.4" fill="none" stroke="#f0e6fa" stroke-width="1.6"/><circle cx="17" cy="15" r="5.6" fill="none" stroke="#f0e6fa" stroke-width="1.6"/><circle cx="17" cy="15" r="2.4" fill="#f6f0fc"/><rect x="15" y="18.6" width="4" height="9.6" rx="2" fill="#f6f0fc"/></g><g transform="translate(737.2 903.5)"><circle cx="17" cy="17" r="16.6" fill="url(#gStore)"/><path d="M17.6 7.6 L9.6 23.6 M16.4 7.6 L24.4 23.6 M7 19.4 L27 19.4" stroke="#f2f6fa" stroke-width="2.4" stroke-linecap="round"/></g><g transform="translate(777.2 903)"><rect x="0.4" y="0.4" width="33.2" height="33.2" fill="#2a0b10" stroke="#c4302c" stroke-width="1.4"/><path d="M6.6 26.6 C7.6 22 15.6 18.6 16.6 9.6 C17.2 5.4 14.6 5.4 15 9 C15.6 15.4 22.6 21.4 27 21.4 C29.6 21.4 29.2 19 26 19 C20 19 12 22 8.6 26.6 C7.6 28 6.2 28 6.6 26.6 Z" fill="none" stroke="#efe6e6" stroke-width="1.5"/></g><g transform="translate(817.6 902.6)"><rect x="0" y="0.4" width="34" height="33.2" rx="4.6" fill="#320a0d"/></g><g transform="translate(857.7 902.6)"><rect x="0" y="0.4" width="34" height="33.2" rx="4.6" fill="#08192a"/></g><g transform="translate(897.7 903.6)"><path d="M3 12 C-0.6 4.4 7.6 -1 12.6 2.4 C23 0 32.4 7.6 31.4 18 C35.6 25.4 28 33.6 21.4 30.6 C11 33.6 1 25 3 12 Z" fill="#fcfdfe"/></g><g transform="translate(955.8 903.2)"><rect x="0" y="0.2" width="34" height="33.6" rx="3" fill="url(#gStack)"/><path d="M8.6 11.6 L17 6.4 L25.4 11.6" fill="none" stroke="#f2f2ff" stroke-width="3"/><path d="M8.6 18.2 L17 13 L25.4 18.2" fill="none" stroke="#c4c4f6" stroke-width="3"/><path d="M8.6 24.8 L17 19.6 L25.4 24.8" fill="none" stroke="#9e9eea" stroke-width="3"/></g><g transform="translate(995.5 903)"><rect x="4.4" y="1.6" width="28" height="20" fill="#b9a27a" transform="rotate(3 17 17)"/><g transform="rotate(-5 17 17)"><rect x="0.6" y="5.6" width="28.6" height="22.6" fill="#f0f0ee"/><rect x="2.2" y="7.2" width="25.4" height="19.4" fill="#a9c2f0"/><path d="M2.2 18 L12 15 L27.6 18.6 L27.6 26.6 L2.2 26.6 Z" fill="#e8ecf2"/><path d="M2.2 17 L10 15.4 L20 18 L8 19.6 L2.2 19.4 Z" fill="#1c2c5a"/></g><circle cx="26" cy="24.6" r="5.6" fill="#d8d8d4" fill-opacity=".7" stroke="#8a8478" stroke-width="2"/></g><g transform="translate(1036.3 903.5)"><circle cx="17" cy="17" r="16.4" fill="#3c4450"/><circle cx="17" cy="17" r="14" fill="#20252c"/><circle cx="17" cy="17" r="10.6" fill="url(#gQT)"/><circle cx="17.6" cy="16.4" r="4.4" fill="#1c2026"/><path d="M18 18 L30 29.6 L25.4 31.6 L14.6 21.6 Z" fill="#1c2026"/></g><g transform="translate(1094.3 902.8)"><path d="M3.2 5.6 L30.8 5.6 L27.6 32 C27.4 33.6 26.6 34.4 25 34.4 L9 34.4 C7.4 34.4 6.6 33.6 6.4 32 Z" fill="url(#gTrash)" fill-opacity=".93"/><ellipse cx="17" cy="5.6" rx="13.8" ry="2.8" fill="#e8e9ea"/><path d="M6.6 5.4 L10 2.6 L14 4.6 L17.6 2 L22 4.6 L26 3 L27.6 5.6" fill="#5a5a58" stroke="#f4f4f4" stroke-width="1"/></g></svg>
<span class="t" style="left:508.6px;top:905.9px;font-size:5.5px;line-height:7.5px;font-weight:bold;color:#fbeaea;transform:scaleX(0.828);">JUL</span>
<span class="t" style="left:508.4px;top:913.5px;font-size:17px;line-height:19px;font-weight:normal;color:#3a3a3a;transform:scaleX(0.994);">8</span>
<span class="t" style="left:824.2px;top:908px;font-size:22px;line-height:24px;font-weight:bold;color:#f59a23;transform:scaleX(0.909);">Ai</span>
<span class="t" style="left:863.8px;top:908px;font-size:22px;line-height:24px;font-weight:bold;color:#4aa3ef;transform:scaleX(0.817);">Ps</span>
<span class="t" style="left:906.6px;top:906.4px;font-size:26px;line-height:28px;font-weight:bold;color:#0f89ab;transform:scaleX(0.946);">S</span>
<svg id="helmet" class="a" style="left:0;top:0" width="1440" height="1080" viewBox="0 0 1440 1080">
<path d="M405.6 698.0 C405.6 694.2 405.5 682.0 405.5 675.0 C405.5 668.0 405.2 660.5 405.4 656.0 C405.6 651.5 405.6 650.7 406.7 648.3 C407.8 645.9 410.0 643.9 411.7 641.7 C413.4 639.5 415.5 637.2 416.7 635.0 C417.9 632.8 417.9 632.8 418.8 628.3 C419.7 623.8 420.8 614.8 421.8 608.1 C422.8 601.4 423.9 594.4 425.0 587.9 C426.1 581.4 427.2 575.7 428.4 569.3 C429.6 562.9 430.9 555.9 432.4 549.3 C433.9 542.7 435.5 536.0 437.3 529.5 C439.1 523.0 441.3 516.2 443.4 510.0 C445.5 503.8 447.5 498.3 449.8 492.2 C452.1 486.1 454.7 479.4 457.4 473.2 C460.1 466.9 462.9 460.8 466.0 454.7 C469.1 448.6 472.4 442.4 475.7 436.8 C479.0 431.2 482.3 426.3 486.0 420.9 C489.7 415.5 494.0 409.8 498.1 404.4 C502.2 399.0 506.4 393.6 510.8 388.5 C515.2 383.4 520.1 378.2 524.8 373.7 C529.5 369.2 533.9 365.4 539.1 361.4 C544.3 357.4 550.1 353.4 555.8 349.7 C561.5 346.0 567.3 342.6 573.3 339.3 C579.3 336.1 585.6 332.9 591.6 330.2 C597.6 327.5 602.9 325.3 609.1 323.2 C615.3 321.1 622.1 319.2 628.7 317.7 C635.3 316.2 642.1 315.2 648.8 314.4 C655.5 313.6 662.6 313.1 669.1 312.8 C675.6 312.5 681.5 312.5 688.0 312.7 C694.5 312.9 701.6 313.4 708.4 314.1 C715.1 314.8 721.8 315.7 728.5 317.0 C735.2 318.3 742.1 319.9 748.4 321.7 C754.7 323.5 760.2 325.4 766.2 327.8 C772.2 330.2 778.7 333.2 784.7 336.3 C790.8 339.4 799.5 344.6 802.5 346.3 C803.8 346.6 806.5 347.9 810.0 348.2 C813.5 348.5 819.1 348.2 823.3 348.3 C827.5 348.4 832.0 348.3 835.0 348.7 C838.0 349.1 839.3 349.5 841.0 350.5 C842.7 351.5 844.0 352.6 845.0 354.5 C846.0 356.4 846.4 358.3 846.7 361.7 C847.0 365.1 847.0 370.9 846.7 375.0 C846.5 379.1 845.7 382.8 845.2 386.0 C844.7 389.2 843.8 392.7 843.5 394.0 C843.8 394.8 844.6 396.9 845.5 398.5 C846.4 400.1 847.0 400.1 848.6 403.5 C850.2 406.9 853.1 413.9 855.1 419.0 C857.1 424.1 858.9 429.1 860.5 434.3 C862.1 439.6 863.6 445.1 864.9 450.5 C866.1 455.9 867.1 461.6 868.0 467.0 C868.9 472.4 869.6 477.6 870.2 483.1 C870.8 488.6 871.4 494.2 871.8 499.8 C872.2 505.4 872.5 511.0 872.7 516.6 C872.9 522.2 872.9 527.9 872.9 533.4 C872.9 538.9 872.7 544.2 872.5 549.7 C872.3 555.2 871.9 560.9 871.5 566.5 C871.1 572.1 870.5 577.7 869.9 583.2 C869.3 588.7 868.5 593.9 867.8 599.4 C867.0 604.9 866.1 612.4 865.4 616.0 C864.7 619.6 864.5 619.7 863.5 621.0 C862.5 622.3 861.2 623.1 859.5 623.6 C857.8 624.1 854.7 624.0 853.0 624.3 C851.3 624.6 850.3 624.9 849.5 625.5 C848.7 626.1 848.5 626.3 848.0 628.0 C847.5 629.7 847.5 632.4 846.7 635.8 C845.9 639.2 844.7 644.0 843.3 648.3 C841.9 652.6 840.1 657.5 838.3 661.7 C836.5 665.9 834.4 669.8 832.5 673.3 C830.6 676.8 828.7 679.4 826.7 682.5 C824.8 685.6 822.8 688.7 820.8 691.7 C818.8 694.7 816.8 698.3 814.5 700.5 C812.2 702.7 809.8 704.1 807.0 705.0 C804.2 705.9 799.5 705.6 798.0 705.7 L414 705.7 C408.5 705.7 405.6 703 405.6 698 Z" fill="#ef3d4f" stroke="#222736" stroke-width="7" stroke-linejoin="round"/>
<path d="M402.8 681.7 L830 681.7 C824 693 819 700 813 705 C809 708 805 709 800 709 L411 709 C405.5 709 402.8 706 402.8 700.5 Z" fill="#222736"/>
<path d="M793.8 352.4 C801 350 811 348.5 822 348.4" fill="none" stroke="#222736" stroke-width="7" stroke-linecap="round"/>
<path d="M845.7 382 C843.8 392 840.3 401 836.8 409.5" fill="none" stroke="#222736" stroke-width="7" stroke-linecap="round"/>
<path d="M489.5 420.6 C491.2 421.6 494.9 423.9 500.0 426.5 C505.1 429.1 513.3 432.9 520.0 436.0 C526.7 439.1 534.0 442.3 540.0 445.0 C546.0 447.7 551.5 450.5 556.0 452.3 C560.5 454.1 564.9 455.4 566.7 456.0 L583.3 452 L606 446.3" fill="none" stroke="#222736" stroke-width="6.5" stroke-linecap="round" stroke-linejoin="round"/>
<path d="M466.2 459.0 C469.1 460.7 477.7 465.8 483.3 469.2 C488.9 472.6 493.9 476.0 500.0 479.2 C506.1 482.4 514.2 485.6 520.0 488.3 C525.8 491.0 530.8 493.5 535.0 495.3 C539.2 497.1 541.9 498.4 545.5 499.3 C549.1 500.2 553.2 499.6 556.7 500.8 C560.2 502.0 564.2 504.0 566.7 506.7 C569.2 509.4 570.5 513.1 571.7 516.7 C573.0 520.3 573.9 524.6 574.2 528.3 C574.5 532.0 573.6 537.2 573.5 539.0" fill="none" stroke="#222736" stroke-width="6.5" stroke-linecap="round" stroke-linejoin="round"/>
<path d="M566.5 456.5 L541 494.5" fill="none" stroke="#222736" stroke-width="6.5" stroke-linecap="round" stroke-linejoin="round"/>
<path d="M546.0 497.0 C549.5 495.4 560.5 490.0 566.7 487.4 C572.9 484.8 577.4 483.5 583.3 481.6 C589.2 479.8 598.9 477.2 602.0 476.3" fill="none" stroke="#222736" stroke-width="6.5" stroke-linecap="round" stroke-linejoin="round"/>
<path d="M433.3 561.7 C436.1 562.0 443.1 563.0 450.0 563.3 C456.9 563.6 466.7 563.8 475.0 563.3 C483.3 562.8 492.5 561.7 500.0 560.6 C507.5 559.5 514.5 557.9 520.0 556.5 C525.5 555.1 526.9 554.5 533.3 552.5 C539.7 550.5 551.3 546.7 558.3 544.2 C565.2 541.7 569.4 540.0 575.0 537.5 C580.6 535.0 586.2 532.2 591.7 529.2 C597.2 526.2 602.8 522.7 608.3 519.2 C613.8 515.7 620.4 511.2 625.0 508.3 C629.6 505.4 634.2 502.6 636.0 501.5" fill="none" stroke="#222736" stroke-width="6.5" stroke-linecap="round" stroke-linejoin="round"/>
<path d="M436.7 544.2 C440.3 544.6 451.9 545.9 458.3 546.3 C464.7 546.6 468.1 546.7 475.0 546.3 C481.9 545.9 492.8 544.8 500.0 543.8 C507.2 542.8 515.4 541.1 518.5 540.6" fill="none" stroke="#222736" stroke-width="4.3" stroke-linecap="round" stroke-linejoin="round"/>
<path d="M529 538.3 L551.5 531.8" fill="none" stroke="#222736" stroke-width="4.4" stroke-linecap="round" stroke-linejoin="round"/>
<path d="M481.6 574.0 C481.5 575.5 481.3 580.0 481.0 583.0 C480.7 586.0 480.3 589.5 479.6 592.0 C478.9 594.5 478.3 596.5 476.7 598.3 C475.1 600.1 473.6 601.3 470.0 602.9 C466.4 604.5 460.3 606.2 455.0 607.9 C449.7 609.6 443.7 611.5 438.3 613.3 C432.9 615.1 425.1 617.7 422.5 618.6" fill="none" stroke="#222736" stroke-width="5" stroke-linecap="butt" stroke-linejoin="round"/>
<path d="M410 642.6 C428 642 452 645.4 461.5 651.6 C466 654.8 468 657.6 466.6 660 C463 666 447 670 430 671.3 C421 671.9 413 671.2 406.5 670" fill="none" stroke="#222736" stroke-width="6"/>
<circle cx="637.2" cy="465.7" r="34.2" fill="#ef3d4f" stroke="#222736" stroke-width="7.4"/>
<circle cx="637.2" cy="465.7" r="13.5" fill="none" stroke="#222736" stroke-width="6.6"/>
<circle cx="637.2" cy="465.7" r="4.3" fill="#222736" />
<circle cx="584.9" cy="500.2" r="3.8" fill="#222736" />
<circle cx="600" cy="506" r="7.6" fill="#222736" />
<circle cx="769.2" cy="642.2" r="27.5" fill="none" stroke="#222736" stroke-width="6.7"/>
<circle cx="769.2" cy="642.2" r="11" fill="none" stroke="#222736" stroke-width="7"/>
<circle cx="769.2" cy="642.2" r="3.7" fill="#222736" />
<path d="M761.5 634.5 L751 624.3" fill="none" stroke="#222736" stroke-width="4.7" stroke-linecap="butt" stroke-linejoin="round"/>
<path d="M775.3 632.5 L780.3 618.5" fill="none" stroke="#222736" stroke-width="4.7" stroke-linecap="butt" stroke-linejoin="round"/>
</svg>
</div>
</body>
</html>
